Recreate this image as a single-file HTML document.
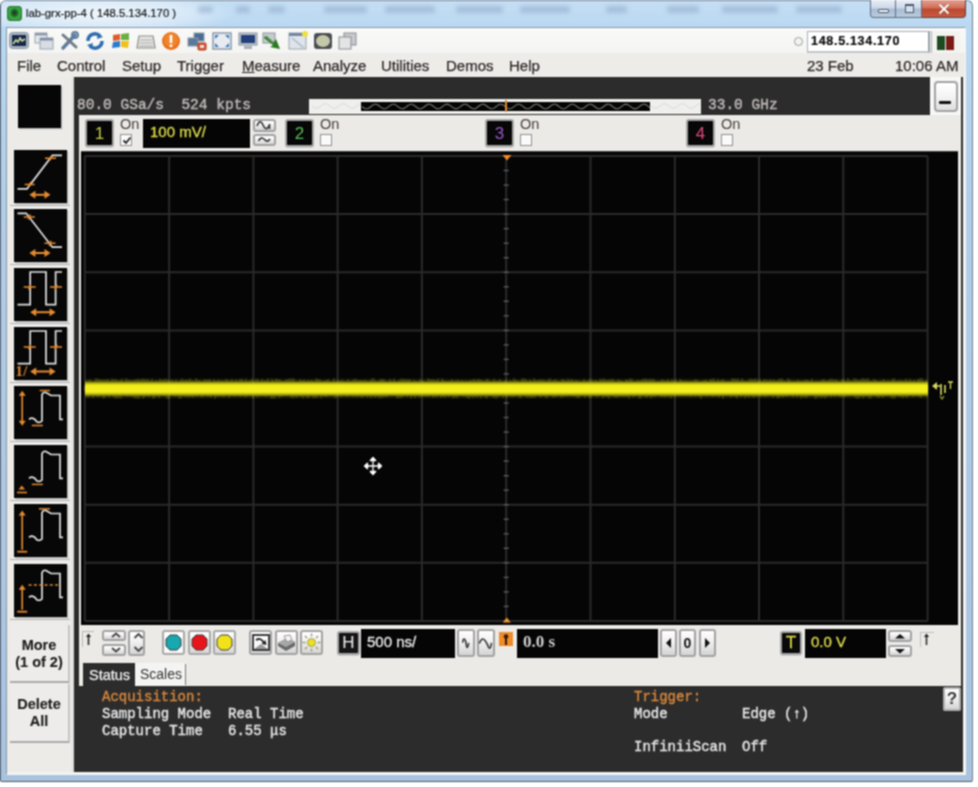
<!DOCTYPE html>
<html><head><meta charset="utf-8">
<style>
*{margin:0;padding:0;box-sizing:border-box}
html,body{width:978px;height:787px;overflow:hidden;background:#fff;font-family:"Liberation Sans",sans-serif}
.a{position:absolute}
.m{position:absolute;font-family:"Liberation Mono",monospace;white-space:pre;line-height:1}
.t{position:absolute;white-space:nowrap;line-height:1}
.btn{position:absolute;background:linear-gradient(#fefefe,#f0f0f0 45%,#d4d4d4);border:2px solid #a2a2a2;border-radius:3px}
.chb{position:absolute;background:#070707;border:2px solid #a4a4a4;border-radius:3px;box-shadow:0 1px 0 #cfcfcf}
.cb{position:absolute;width:12px;height:12px;background:#fafafa;border:1px solid #8f8f8f}
.mb{position:absolute;left:14px;width:53px;height:53px;background:#070707;box-shadow:1px 1px 0 #b8b8b8,2px 2px 0 #dcdcdc}
.blk{position:absolute;background:#050505}
svg{position:absolute;overflow:visible}
#wrap{position:absolute;left:0;top:0;width:978px;height:787px;filter:url(#sb)}
</style></head><body><svg width="0" height="0" style="position:absolute"><filter id="sb" x="0" y="0" width="100%" height="100%" color-interpolation-filters="sRGB"><feConvolveMatrix order="3" kernelMatrix="1 2 1 2 4 2 1 2 1" edgeMode="duplicate"/></filter></svg><div id="wrap">

<div class="a" style="left:0;top:0;width:973px;height:782px;background:linear-gradient(#c4def4,#b9d8f1 26px,#b2cde8 200px,#a9c3df);border:1px solid #6f8296;border-bottom-color:#4a5868;border-left-color:#5a6878;border-radius:6px 6px 2px 2px"></div>
<div class="a" style="left:1px;top:1px;width:260px;height:26px;background:radial-gradient(ellipse 140px 22px at 95px 13px,rgba(255,255,255,.75),rgba(255,255,255,.35) 70%,rgba(255,255,255,0) 100%)"></div>
<div class="a" style="left:198px;top:6px;width:15px;height:7px;background:#8fa8c8;filter:blur(2px);opacity:.55;border-radius:2px"></div>
<div class="a" style="left:236px;top:6px;width:14px;height:7px;background:#8fa8c8;filter:blur(2px);opacity:.55;border-radius:2px"></div>
<div class="a" style="left:268px;top:6px;width:17px;height:7px;background:#8fa8c8;filter:blur(2px);opacity:.55;border-radius:2px"></div>
<div class="a" style="left:324px;top:6px;width:43px;height:7px;background:#8fa8c8;filter:blur(2px);opacity:.55;border-radius:2px"></div>
<div class="a" style="left:385px;top:6px;width:50px;height:7px;background:#8fa8c8;filter:blur(2px);opacity:.55;border-radius:2px"></div>
<div class="a" style="left:456px;top:6px;width:47px;height:7px;background:#8fa8c8;filter:blur(2px);opacity:.55;border-radius:2px"></div>
<div class="a" style="left:520px;top:6px;width:50px;height:7px;background:#8fa8c8;filter:blur(2px);opacity:.55;border-radius:2px"></div>
<div class="a" style="left:606px;top:6px;width:21px;height:7px;background:#8fa8c8;filter:blur(2px);opacity:.55;border-radius:2px"></div>
<div class="a" style="left:667px;top:6px;width:32px;height:7px;background:#8fa8c8;filter:blur(2px);opacity:.55;border-radius:2px"></div>
<div class="a" style="left:722px;top:6px;width:56px;height:7px;background:#8fa8c8;filter:blur(2px);opacity:.55;border-radius:2px"></div>
<div class="a" style="left:796px;top:6px;width:46px;height:7px;background:#8fa8c8;filter:blur(2px);opacity:.55;border-radius:2px"></div>
<div class="a" style="left:7px;top:6px;width:15px;height:15px;background:radial-gradient(ellipse at 50% 45%,#183c1a 0,#1f5a24 25%,#3bab47 55%,#2b8a34 100%);border-radius:3px;border:1px solid #2a7a30"></div>
<div class="t" style="left:26px;top:8px;font-size:11.3px;color:#161616;-webkit-text-stroke:0.2px #161616">lab-grx-pp-4 ( 148.5.134.170 )</div>
<div class="a" style="left:870px;top:0;width:26px;height:18px;background:linear-gradient(#e8eef6,#ccd9e8 45%,#a9bcd3 55%,#b9cade);border:1px solid #5d6d80;border-top:none;border-radius:0 0 0 4px"></div>
<div class="a" style="left:878px;top:9px;width:11px;height:4px;background:#f4f6f8;border:1px solid #4a586a;border-radius:1px"></div>
<div class="a" style="left:896px;top:0;width:26px;height:18px;background:linear-gradient(#e8eef6,#ccd9e8 45%,#a9bcd3 55%,#b9cade);border:1px solid #5d6d80;border-top:none;border-left:none"></div>
<div class="a" style="left:905px;top:4px;width:9px;height:9px;border:1px solid #4a586a;border-top-width:2px;background:#d6e0ec"></div>
<div class="a" style="left:922px;top:0;width:44px;height:18px;background:linear-gradient(#e4a090,#d07058 45%,#bc4830 55%,#c85a40);border:1px solid #5e4038;border-top:none;border-left:none;border-radius:0 0 4px 0"></div>
<svg style="left:937px;top:3px" width="14" height="12"><path d="M2.5 1.5 L11.5 10.5 M11.5 1.5 L2.5 10.5" stroke="#6a3a30" stroke-width="3.6" opacity=".45"/><path d="M2.5 1.5 L11.5 10.5 M11.5 1.5 L2.5 10.5" stroke="#fff" stroke-width="2"/></svg>
<div class="a" style="left:6px;top:27px;width:960px;height:748px;background:#f1f1ef;border:1px solid #8797a8;border-right-color:#f4f6f8;border-bottom-color:#f4f6f8"></div>
<div class="a" style="left:7px;top:28px;width:958px;height:25px;background:linear-gradient(#f9f9f8,#f4f4f2)"></div>
<div class="a" style="left:7px;top:53px;width:958px;height:24px;background:#edece9"></div>
<svg style="left:9px;top:32px" width="20" height="18"><rect x="0.5" y="0.5" width="19" height="16" rx="3" fill="#aab4c0" stroke="#8a96a4"/><rect x="3" y="3" width="14" height="11" fill="#15294a"/><path d="M4 12 L7 8 L9 10 L11 6 L13 9 L16 7" stroke="#d8dca0" stroke-width="1.6" fill="none"/></svg>
<svg style="left:34px;top:32px" width="20" height="18"><rect x="1" y="1" width="12" height="10" fill="#e4e8ee" stroke="#9aa4b0"/><rect x="1" y="1" width="12" height="2.5" fill="#8c98a8"/><rect x="6" y="6" width="13" height="11" fill="#d8dde4" stroke="#9aa4b0"/><rect x="6" y="6" width="13" height="2.5" fill="#7f8ea2"/></svg>
<svg style="left:60px;top:32px" width="20" height="18"><path d="M3 16 L15 3" stroke="#5f7ea0" stroke-width="3.5" stroke-linecap="round"/><path d="M3 3 L16 15" stroke="#6f7c88" stroke-width="3" stroke-linecap="round"/><circle cx="15" cy="3" r="3" fill="none" stroke="#5f7ea0" stroke-width="2"/></svg>
<svg style="left:85px;top:32px" width="20" height="18"><path d="M3 9 A7 7 0 0 1 15 4" stroke="#2f6cb0" stroke-width="3.5" fill="none"/><path d="M17 9 A7 7 0 0 1 5 14" stroke="#2f6cb0" stroke-width="3.5" fill="none"/><path d="M13 1 L18 5 L12 7Z M7 17 L2 13 L8 11Z" fill="#2f6cb0"/></svg>
<svg style="left:111px;top:32px" width="20" height="18"><path d="M2 3 L9 2 L9 8 L2 9Z" fill="#e05a2a"/><path d="M10 2 L18 1 L18 8 L10 8Z" fill="#6ab040"/><path d="M2 10 L9 9 L9 15 L1 16Z" fill="#2a7ad0"/><path d="M10 9 L18 9 L17 16 L10 15Z" fill="#f0c020"/></svg>
<svg style="left:136px;top:32px" width="20" height="18"><path d="M3 4 L17 4 L19 16 L1 16Z" fill="#e6e6e2" stroke="#8a8a86" stroke-width="1.2"/><path d="M4 8 H16 M3.5 11 H16.5 M3 14 H17" stroke="#a8a8a4"/></svg>
<svg style="left:161px;top:32px" width="20" height="18"><circle cx="10" cy="9" r="9" fill="#e8701c"/><circle cx="10" cy="8" r="7" fill="#f0842a"/><rect x="8.7" y="3" width="2.6" height="8" fill="#fff"/><rect x="8.7" y="12.5" width="2.6" height="2.6" fill="#fff"/></svg>
<svg style="left:187px;top:32px" width="20" height="18"><rect x="7" y="1" width="10" height="8" fill="#4a6a90" stroke="#8a9cb0"/><rect x="1" y="6" width="10" height="8" fill="#5a7898" stroke="#8a9cb0"/><rect x="11" y="11" width="8" height="7" rx="1" fill="#d85838" stroke="#a83a20"/><rect x="13" y="13" width="4" height="3" fill="#f4d8d0"/></svg>
<svg style="left:212px;top:32px" width="20" height="18"><rect x="1" y="1" width="18" height="16" fill="#e8ecf0" stroke="#8a98a8" stroke-width="1.5"/><path d="M3 3 L7 3 L3 7Z M17 3 L13 3 L17 7Z M3 15 L7 15 L3 11Z M17 15 L13 15 L17 11Z" fill="#3a7ac0"/></svg>
<svg style="left:238px;top:32px" width="20" height="18"><rect x="1" y="1" width="18" height="12" fill="#b8c0cc" stroke="#8a94a2"/><rect x="3" y="3" width="14" height="8" fill="#23407a"/><rect x="6" y="14" width="8" height="3" fill="#a8b0b8"/></svg>
<svg style="left:262px;top:32px" width="20" height="18"><rect x="1" y="1" width="12" height="10" fill="#c8ccd2" stroke="#8a929c"/><path d="M3 4 L11 11 L14 7 L18 17 L8 15 L11 13 L2 6Z" fill="#2a7a24"/><path d="M4 4 L11 10" stroke="#5aa050" stroke-width="1.5"/></svg>
<svg style="left:288px;top:32px" width="20" height="18"><rect x="1" y="1" width="17" height="16" fill="#dfe4ea" stroke="#9aa4b0"/><rect x="1" y="1" width="17" height="3" fill="#7488a4"/><circle cx="17" cy="2" r="3" fill="#f0e040"/><path d="M4 6 L16 16" stroke="#b8c4d2" stroke-width="2"/></svg>
<svg style="left:313px;top:32px" width="20" height="18"><rect x="1" y="1" width="18" height="16" rx="3" fill="#4a4e52"/><ellipse cx="10" cy="9" rx="7" ry="6" fill="#c4c8a8"/></svg>
<svg style="left:338px;top:32px" width="20" height="18"><rect x="6" y="1" width="12" height="12" fill="#c8cacc" stroke="#8a8c90"/><rect x="1" y="5" width="12" height="12" fill="#e2e4e6" stroke="#8a8c90"/></svg>
<div class="t" style="left:17px;top:58px;font-size:15px;color:#2c2626;-webkit-text-stroke:0.25px #2c2626">File</div>
<div class="t" style="left:57px;top:58px;font-size:15px;color:#2c2626;-webkit-text-stroke:0.25px #2c2626">Control</div>
<div class="t" style="left:122px;top:58px;font-size:15px;color:#2c2626;-webkit-text-stroke:0.25px #2c2626">Setup</div>
<div class="t" style="left:177px;top:58px;font-size:15px;color:#2c2626;-webkit-text-stroke:0.25px #2c2626">Trigger</div>
<div class="t" style="left:242px;top:58px;font-size:15px;color:#2c2626;-webkit-text-stroke:0.25px #2c2626"><u>M</u>easure</div>
<div class="t" style="left:313px;top:58px;font-size:15px;color:#2c2626;-webkit-text-stroke:0.25px #2c2626">Analyze</div>
<div class="t" style="left:381px;top:58px;font-size:15px;color:#2c2626;-webkit-text-stroke:0.25px #2c2626">Utilities</div>
<div class="t" style="left:446px;top:58px;font-size:15px;color:#2c2626;-webkit-text-stroke:0.25px #2c2626">Demos</div>
<div class="t" style="left:509px;top:58px;font-size:15px;color:#2c2626;-webkit-text-stroke:0.25px #2c2626">Help</div>
<div class="t" style="left:807px;top:58px;font-size:15px;color:#2c2626;-webkit-text-stroke:0.25px #2c2626">23 Feb</div>
<div class="t" style="left:895px;top:58px;font-size:15px;color:#2c2626;-webkit-text-stroke:0.25px #2c2626">10:06 AM</div>
<div class="a" style="left:794px;top:37px;width:9px;height:9px;border:1px solid #9a9a9a;border-radius:50%;background:#f4f4f4"></div>
<div class="a" style="left:807px;top:31px;width:123px;height:22px;background:#fff;border:1px solid #a8b0ba;border-right:2px solid #9aa0a8;border-bottom:2px solid #c0c6cc"></div>
<div class="t" style="left:811px;top:35px;font-size:12.5px;font-weight:bold;color:#0a0a0a;letter-spacing:0.7px;-webkit-text-stroke:0.2px #0a0a0a">148.5.134.170</div>
<div class="a" style="left:931px;top:31px;width:29px;height:22px;background:#f2f2f0;border-left:1px solid #b0b0b0"></div>
<div class="a" style="left:937px;top:36px;width:8px;height:14px;background:#1e4a22"></div>
<div class="a" style="left:946px;top:36px;width:8px;height:14px;background:#7a1a16"></div>
<div class="a" style="left:74px;top:77px;width:889px;height:695px;background:#2c2c2c"></div>
<div class="a" style="left:7px;top:77px;width:67px;height:695px;background:#ecebe8"></div>
<div class="a" style="left:72px;top:77px;width:2px;height:695px;background:#dcdcda"></div>
<div class="a" style="left:930px;top:77px;width:31px;height:38px;background:#f7f7f6"></div>
<div class="a" style="left:79px;top:115px;width:882px;height:571px;background:#ebeae7"></div>
<div class="m" style="left:77px;top:98px;font-size:14.5px;color:#bdb7b7;-webkit-text-stroke:0.45px #bdb7b7">80.0 GSa/s  524 kpts</div>
<div class="m" style="left:708px;top:98px;font-size:14.5px;color:#bdb7b7;-webkit-text-stroke:0.45px #bdb7b7">33.0 GHz</div>
<div class="a" style="left:309px;top:99px;width:392px;height:15px;background:#efefee"></div>
<div class="a" style="left:361px;top:102px;width:289px;height:9px;background:#050505"></div>
<svg style="left:362px;top:0" width="288" height="1"><polyline points="0.0,106.50 1.0,107.29 2.0,107.99 3.0,108.50 4.0,108.77 5.0,108.76 6.0,108.48 7.0,107.95 8.0,107.25 9.0,106.46 10.0,105.67 11.0,104.98 12.0,104.48 13.0,104.23 14.0,104.25 15.0,104.54 16.0,105.08 17.0,105.79 18.0,106.58 19.0,107.37 20.0,108.05 21.0,108.54 22.0,108.78 23.0,108.74 24.0,108.44 25.0,107.89 26.0,107.18 27.0,106.38 28.0,105.60 29.0,104.92 30.0,104.44 31.0,104.21 32.0,104.26 33.0,104.59 34.0,105.14 35.0,105.86 36.0,106.66 37.0,107.44 38.0,108.10 39.0,108.57 40.0,108.79 41.0,108.73 42.0,108.39 43.0,107.83 44.0,107.10 45.0,106.30 46.0,105.52 47.0,104.87 48.0,104.41 49.0,104.21 50.0,104.28 51.0,104.63 52.0,105.21 53.0,105.94 54.0,106.74 55.0,107.51 56.0,108.16 57.0,108.61 58.0,108.80 59.0,108.70 60.0,108.34 61.0,107.76 62.0,107.02 63.0,106.22 64.0,105.45 65.0,104.81 66.0,104.38 67.0,104.20 68.0,104.31 69.0,104.68 70.0,105.28 71.0,106.02 72.0,106.82 73.0,107.59 74.0,108.22 75.0,108.64 76.0,108.80 77.0,108.68 78.0,108.29 79.0,107.69 80.0,106.94 81.0,106.14 82.0,105.38 83.0,104.76 84.0,104.35 85.0,104.20 86.0,104.33 87.0,104.73 88.0,105.34 89.0,106.10 90.0,106.90 91.0,107.66 92.0,108.27 93.0,108.67 94.0,108.80 95.0,108.65 96.0,108.24 97.0,107.62 98.0,106.86 99.0,106.06 100.0,105.31 101.0,104.71 102.0,104.32 103.0,104.20 104.0,104.36 105.0,104.78 106.0,105.41 107.0,106.18 108.0,106.98 109.0,107.72 110.0,108.32 111.0,108.69 112.0,108.80 113.0,108.62 114.0,108.19 115.0,107.55 116.0,106.78 117.0,105.98 118.0,105.24 119.0,104.66 120.0,104.30 121.0,104.20 122.0,104.39 123.0,104.84 124.0,105.49 125.0,106.26 126.0,107.06 127.0,107.79 128.0,108.37 129.0,108.72 130.0,108.79 131.0,108.59 132.0,108.13 133.0,107.48 134.0,106.70 135.0,105.90 136.0,105.17 137.0,104.61 138.0,104.27 139.0,104.21 140.0,104.43 141.0,104.90 142.0,105.56 143.0,106.34 144.0,107.14 145.0,107.86 146.0,108.41 147.0,108.74 148.0,108.79 149.0,108.56 150.0,108.08 151.0,107.40 152.0,106.62 153.0,105.82 154.0,105.11 155.0,104.56 156.0,104.26 157.0,104.22 158.0,104.46 159.0,104.95 160.0,105.63 161.0,106.42 162.0,107.21 163.0,107.92 164.0,108.46 165.0,108.75 166.0,108.77 167.0,108.52 168.0,108.02 169.0,107.33 170.0,106.54 171.0,105.75 172.0,105.05 173.0,104.52 174.0,104.24 175.0,104.23 176.0,104.50 177.0,105.01 178.0,105.71 179.0,106.50 180.0,107.29 181.0,107.99 182.0,108.50 183.0,108.77 184.0,108.76 185.0,108.48 186.0,107.95 187.0,107.25 188.0,106.46 189.0,105.67 190.0,104.98 191.0,104.48 192.0,104.23 193.0,104.25 194.0,104.54 195.0,105.08 196.0,105.79 197.0,106.58 198.0,107.37 199.0,108.05 200.0,108.54 201.0,108.78 202.0,108.74 203.0,108.44 204.0,107.89 205.0,107.18 206.0,106.38 207.0,105.60 208.0,104.92 209.0,104.44 210.0,104.21 211.0,104.26 212.0,104.59 213.0,105.14 214.0,105.86 215.0,106.66 216.0,107.44 217.0,108.10 218.0,108.57 219.0,108.79 220.0,108.73 221.0,108.39 222.0,107.83 223.0,107.10 224.0,106.30 225.0,105.52 226.0,104.87 227.0,104.41 228.0,104.21 229.0,104.28 230.0,104.63 231.0,105.21 232.0,105.94 233.0,106.74 234.0,107.51 235.0,108.16 236.0,108.61 237.0,108.80 238.0,108.70 239.0,108.34 240.0,107.76 241.0,107.02 242.0,106.22 243.0,105.45 244.0,104.81 245.0,104.38 246.0,104.20 247.0,104.31 248.0,104.68 249.0,105.28 250.0,106.02 251.0,106.82 252.0,107.59 253.0,108.22 254.0,108.64 255.0,108.80 256.0,108.68 257.0,108.29 258.0,107.69 259.0,106.94 260.0,106.14 261.0,105.38 262.0,104.76 263.0,104.35 264.0,104.20 265.0,104.33 266.0,104.73 267.0,105.34 268.0,106.10 269.0,106.90 270.0,107.66 271.0,108.27 272.0,108.67 273.0,108.80 274.0,108.65 275.0,108.24 276.0,107.62 277.0,106.86 278.0,106.06 279.0,105.31 280.0,104.71 281.0,104.32 282.0,104.20 283.0,104.36 284.0,104.78 285.0,105.41 286.0,106.18 287.0,106.98 288.0,107.72" fill="none" stroke="#7c7c7c" stroke-width="1.1" opacity="1"/></svg>
<svg style="left:312px;top:0" width="48" height="1"><polyline points="0.0,106.00 1.0,106.79 2.0,107.49 3.0,108.00 4.0,108.27 5.0,108.26 6.0,107.98 7.0,107.45 8.0,106.75 9.0,105.96 10.0,105.17 11.0,104.48 12.0,103.98 13.0,103.73 14.0,103.75 15.0,104.04 16.0,104.58 17.0,105.29 18.0,106.08 19.0,106.87 20.0,107.55 21.0,108.04 22.0,108.28 23.0,108.24 24.0,107.94 25.0,107.39 26.0,106.68 27.0,105.88 28.0,105.10 29.0,104.42 30.0,103.94 31.0,103.71 32.0,103.76 33.0,104.09 34.0,104.64 35.0,105.36 36.0,106.16 37.0,106.94 38.0,107.60 39.0,108.07 40.0,108.29 41.0,108.23 42.0,107.89 43.0,107.33 44.0,106.60 45.0,105.80 46.0,105.02 47.0,104.37 48.0,103.91" fill="none" stroke="#dadada" stroke-width="1.0" opacity="1"/></svg>
<svg style="left:651px;top:0" width="49" height="1"><polyline points="0.0,106.00 1.0,106.79 2.0,107.49 3.0,108.00 4.0,108.27 5.0,108.26 6.0,107.98 7.0,107.45 8.0,106.75 9.0,105.96 10.0,105.17 11.0,104.48 12.0,103.98 13.0,103.73 14.0,103.75 15.0,104.04 16.0,104.58 17.0,105.29 18.0,106.08 19.0,106.87 20.0,107.55 21.0,108.04 22.0,108.28 23.0,108.24 24.0,107.94 25.0,107.39 26.0,106.68 27.0,105.88 28.0,105.10 29.0,104.42 30.0,103.94 31.0,103.71 32.0,103.76 33.0,104.09 34.0,104.64 35.0,105.36 36.0,106.16 37.0,106.94 38.0,107.60 39.0,108.07 40.0,108.29 41.0,108.23 42.0,107.89 43.0,107.33 44.0,106.60 45.0,105.80 46.0,105.02 47.0,104.37 48.0,103.91 49.0,103.71" fill="none" stroke="#dadada" stroke-width="1.0" opacity="1"/></svg>
<div class="a" style="left:505px;top:100px;width:2px;height:12px;background:#e08a30"></div>
<div class="btn" style="left:934px;top:81px;width:24px;height:31px;border-radius:4px;background:linear-gradient(#fff,#f4f4f4 50%,#dedede)"></div>
<div class="a" style="left:939px;top:101px;width:12px;height:3px;background:#111;border-radius:1px"></div>
<div class="chb" style="left:85px;top:119px;width:29px;height:28px"></div>
<div class="t" style="left:85px;top:125px;width:29px;text-align:center;font-size:17px;color:#c8cc48">1</div>
<div class="t" style="left:120px;top:117px;font-size:14.5px;color:#463c3c">On</div>
<div class="cb" style="left:120px;top:134px"></div>
<svg style="left:122px;top:136px" width="10" height="9"><path d="M1.5 4.5 L4 7 L8.5 1.5" stroke="#222" stroke-width="1.8" fill="none"/></svg>
<div class="blk" style="left:143px;top:119px;width:107px;height:29px"></div>
<div class="t" style="left:150px;top:124px;font-size:15px;color:#dcdc48;-webkit-text-stroke:0.35px #dcdc48">100 mV/</div>
<div class="btn" style="left:253px;top:119px;width:23px;height:13px"></div>
<div class="btn" style="left:253px;top:134px;width:23px;height:12px"></div>
<svg style="left:252px;top:119px" width="24" height="13"><path d="M5 7 Q8 -1 11 6 Q13.5 12 16.5 8 Q17.5 6 17.5 5 V10" stroke="#333" stroke-width="1.6" fill="none"/></svg>
<svg style="left:252px;top:134px" width="24" height="12"><path d="M6.5 7 Q9 2 12.5 5.5 Q15.5 9 18 5" stroke="#333" stroke-width="1.6" fill="none"/></svg>
<div class="chb" style="left:285px;top:119px;width:29px;height:28px"></div>
<div class="t" style="left:285px;top:125px;width:29px;text-align:center;font-size:17px;color:#58c058">2</div>
<div class="t" style="left:320px;top:117px;font-size:14.5px;color:#463c3c">On</div>
<div class="cb" style="left:320px;top:134px"></div>
<div class="chb" style="left:485px;top:119px;width:29px;height:28px"></div>
<div class="t" style="left:485px;top:125px;width:29px;text-align:center;font-size:17px;color:#9a5ac8">3</div>
<div class="t" style="left:520px;top:117px;font-size:14.5px;color:#463c3c">On</div>
<div class="cb" style="left:520px;top:134px"></div>
<div class="chb" style="left:686px;top:119px;width:29px;height:28px"></div>
<div class="t" style="left:686px;top:125px;width:29px;text-align:center;font-size:17px;color:#e04a7a">4</div>
<div class="t" style="left:721px;top:117px;font-size:14.5px;color:#463c3c">On</div>
<div class="cb" style="left:721px;top:134px"></div>
<div class="blk" style="left:81px;top:151px;width:877px;height:474px;border-top:1px solid #3a3a3a"></div>
<svg style="left:0;top:0" width="978" height="787"><g stroke="#2a2a2a" stroke-width="2"><line x1="84.8" y1="156.0" x2="84.8" y2="620.96" /><line x1="169.1" y1="156.0" x2="169.1" y2="620.96" /><line x1="253.4" y1="156.0" x2="253.4" y2="620.96" /><line x1="337.6" y1="156.0" x2="337.6" y2="620.96" /><line x1="421.9" y1="156.0" x2="421.9" y2="620.96" /><line x1="506.2" y1="156.0" x2="506.2" y2="620.96" /><line x1="590.5" y1="156.0" x2="590.5" y2="620.96" /><line x1="674.8" y1="156.0" x2="674.8" y2="620.96" /><line x1="759.0" y1="156.0" x2="759.0" y2="620.96" /><line x1="843.3" y1="156.0" x2="843.3" y2="620.96" /><line x1="927.6" y1="156.0" x2="927.6" y2="620.96" /><line x1="84.8" y1="156.0" x2="927.6" y2="156.0" /><line x1="84.8" y1="214.1" x2="927.6" y2="214.1" /><line x1="84.8" y1="272.2" x2="927.6" y2="272.2" /><line x1="84.8" y1="330.4" x2="927.6" y2="330.4" /><line x1="84.8" y1="388.5" x2="927.6" y2="388.5" /><line x1="84.8" y1="446.6" x2="927.6" y2="446.6" /><line x1="84.8" y1="504.7" x2="927.6" y2="504.7" /><line x1="84.8" y1="562.8" x2="927.6" y2="562.8" /><line x1="84.8" y1="621.0" x2="927.6" y2="621.0" /></g><g stroke="#5c5c5c" stroke-width="1.4"><line x1="503.7" y1="156.0" x2="508.7" y2="156.0" /><line x1="503.7" y1="170.5" x2="508.7" y2="170.5" /><line x1="503.7" y1="185.1" x2="508.7" y2="185.1" /><line x1="503.7" y1="199.6" x2="508.7" y2="199.6" /><line x1="503.7" y1="214.1" x2="508.7" y2="214.1" /><line x1="503.7" y1="228.6" x2="508.7" y2="228.6" /><line x1="503.7" y1="243.2" x2="508.7" y2="243.2" /><line x1="503.7" y1="257.7" x2="508.7" y2="257.7" /><line x1="503.7" y1="272.2" x2="508.7" y2="272.2" /><line x1="503.7" y1="286.8" x2="508.7" y2="286.8" /><line x1="503.7" y1="301.3" x2="508.7" y2="301.3" /><line x1="503.7" y1="315.8" x2="508.7" y2="315.8" /><line x1="503.7" y1="330.4" x2="508.7" y2="330.4" /><line x1="503.7" y1="344.9" x2="508.7" y2="344.9" /><line x1="503.7" y1="359.4" x2="508.7" y2="359.4" /><line x1="503.7" y1="373.9" x2="508.7" y2="373.9" /><line x1="503.7" y1="388.5" x2="508.7" y2="388.5" /><line x1="503.7" y1="403.0" x2="508.7" y2="403.0" /><line x1="503.7" y1="417.5" x2="508.7" y2="417.5" /><line x1="503.7" y1="432.1" x2="508.7" y2="432.1" /><line x1="503.7" y1="446.6" x2="508.7" y2="446.6" /><line x1="503.7" y1="461.1" x2="508.7" y2="461.1" /><line x1="503.7" y1="475.7" x2="508.7" y2="475.7" /><line x1="503.7" y1="490.2" x2="508.7" y2="490.2" /><line x1="503.7" y1="504.7" x2="508.7" y2="504.7" /><line x1="503.7" y1="519.2" x2="508.7" y2="519.2" /><line x1="503.7" y1="533.8" x2="508.7" y2="533.8" /><line x1="503.7" y1="548.3" x2="508.7" y2="548.3" /><line x1="503.7" y1="562.8" x2="508.7" y2="562.8" /><line x1="503.7" y1="577.4" x2="508.7" y2="577.4" /><line x1="503.7" y1="591.9" x2="508.7" y2="591.9" /><line x1="503.7" y1="606.4" x2="508.7" y2="606.4" /><line x1="503.7" y1="621.0" x2="508.7" y2="621.0" /><line x1="84.8" y1="386.0" x2="84.8" y2="391.0" /><line x1="105.9" y1="386.0" x2="105.9" y2="391.0" /><line x1="126.9" y1="386.0" x2="126.9" y2="391.0" /><line x1="148.0" y1="386.0" x2="148.0" y2="391.0" /><line x1="169.1" y1="386.0" x2="169.1" y2="391.0" /><line x1="190.1" y1="386.0" x2="190.1" y2="391.0" /><line x1="211.2" y1="386.0" x2="211.2" y2="391.0" /><line x1="232.3" y1="386.0" x2="232.3" y2="391.0" /><line x1="253.4" y1="386.0" x2="253.4" y2="391.0" /><line x1="274.4" y1="386.0" x2="274.4" y2="391.0" /><line x1="295.5" y1="386.0" x2="295.5" y2="391.0" /><line x1="316.6" y1="386.0" x2="316.6" y2="391.0" /><line x1="337.6" y1="386.0" x2="337.6" y2="391.0" /><line x1="358.7" y1="386.0" x2="358.7" y2="391.0" /><line x1="379.8" y1="386.0" x2="379.8" y2="391.0" /><line x1="400.9" y1="386.0" x2="400.9" y2="391.0" /><line x1="421.9" y1="386.0" x2="421.9" y2="391.0" /><line x1="443.0" y1="386.0" x2="443.0" y2="391.0" /><line x1="464.1" y1="386.0" x2="464.1" y2="391.0" /><line x1="485.1" y1="386.0" x2="485.1" y2="391.0" /><line x1="506.2" y1="386.0" x2="506.2" y2="391.0" /><line x1="527.3" y1="386.0" x2="527.3" y2="391.0" /><line x1="548.3" y1="386.0" x2="548.3" y2="391.0" /><line x1="569.4" y1="386.0" x2="569.4" y2="391.0" /><line x1="590.5" y1="386.0" x2="590.5" y2="391.0" /><line x1="611.5" y1="386.0" x2="611.5" y2="391.0" /><line x1="632.6" y1="386.0" x2="632.6" y2="391.0" /><line x1="653.7" y1="386.0" x2="653.7" y2="391.0" /><line x1="674.8" y1="386.0" x2="674.8" y2="391.0" /><line x1="695.8" y1="386.0" x2="695.8" y2="391.0" /><line x1="716.9" y1="386.0" x2="716.9" y2="391.0" /><line x1="738.0" y1="386.0" x2="738.0" y2="391.0" /><line x1="759.0" y1="386.0" x2="759.0" y2="391.0" /><line x1="780.1" y1="386.0" x2="780.1" y2="391.0" /><line x1="801.2" y1="386.0" x2="801.2" y2="391.0" /><line x1="822.2" y1="386.0" x2="822.2" y2="391.0" /><line x1="843.3" y1="386.0" x2="843.3" y2="391.0" /><line x1="864.4" y1="386.0" x2="864.4" y2="391.0" /><line x1="885.5" y1="386.0" x2="885.5" y2="391.0" /><line x1="906.5" y1="386.0" x2="906.5" y2="391.0" /><line x1="927.6" y1="386.0" x2="927.6" y2="391.0" /></g></svg>
<div class="a" style="left:85px;top:378px;width:843px;height:21px;background:linear-gradient(rgba(200,200,20,0) 0,rgba(190,190,20,.22) 3px,rgba(225,220,16,.85) 5.5px,#f2ee1a 7.5px,#f4f022 14px,rgba(225,220,16,.85) 16px,rgba(190,190,20,.22) 18.5px,rgba(200,200,20,0) 21px)"></div>
<svg style="left:0;top:0" width="978" height="787"><g stroke="#a8a820" stroke-width="1" opacity=".45"><line x1="86" y1="381.0" x2="86" y2="383.5" /><line x1="87" y1="393.5" x2="87" y2="397.2" /><line x1="88" y1="380.5" x2="88" y2="383.5" /><line x1="89" y1="393.5" x2="89" y2="397.4" /><line x1="90" y1="379.5" x2="90" y2="383.5" /><line x1="91" y1="393.5" x2="91" y2="395.3" /><line x1="92" y1="381.9" x2="92" y2="383.5" /><line x1="93" y1="393.5" x2="93" y2="398.3" /><line x1="94" y1="381.0" x2="94" y2="383.5" /><line x1="95" y1="393.5" x2="95" y2="395.9" /><line x1="96" y1="378.0" x2="96" y2="383.5" /><line x1="97" y1="393.5" x2="97" y2="396.9" /><line x1="98" y1="378.7" x2="98" y2="383.5" /><line x1="99" y1="393.5" x2="99" y2="396.9" /><line x1="100" y1="379.4" x2="100" y2="383.5" /><line x1="101" y1="393.5" x2="101" y2="395.6" /><line x1="102" y1="379.5" x2="102" y2="383.5" /><line x1="103" y1="393.5" x2="103" y2="398.5" /><line x1="104" y1="379.9" x2="104" y2="383.5" /><line x1="105" y1="393.5" x2="105" y2="398.0" /><line x1="106" y1="379.3" x2="106" y2="383.5" /><line x1="107" y1="393.5" x2="107" y2="395.3" /><line x1="108" y1="379.0" x2="108" y2="383.5" /><line x1="109" y1="393.5" x2="109" y2="397.4" /><line x1="110" y1="380.8" x2="110" y2="383.5" /><line x1="111" y1="393.5" x2="111" y2="395.1" /><line x1="112" y1="378.5" x2="112" y2="383.5" /><line x1="113" y1="393.5" x2="113" y2="396.9" /><line x1="114" y1="379.1" x2="114" y2="383.5" /><line x1="115" y1="393.5" x2="115" y2="398.5" /><line x1="116" y1="379.1" x2="116" y2="383.5" /><line x1="117" y1="393.5" x2="117" y2="398.7" /><line x1="118" y1="380.4" x2="118" y2="383.5" /><line x1="119" y1="393.5" x2="119" y2="398.2" /><line x1="120" y1="380.2" x2="120" y2="383.5" /><line x1="121" y1="393.5" x2="121" y2="398.7" /><line x1="122" y1="378.5" x2="122" y2="383.5" /><line x1="123" y1="393.5" x2="123" y2="395.4" /><line x1="124" y1="381.5" x2="124" y2="383.5" /><line x1="125" y1="393.5" x2="125" y2="395.9" /><line x1="126" y1="378.1" x2="126" y2="383.5" /><line x1="127" y1="393.5" x2="127" y2="396.7" /><line x1="128" y1="379.5" x2="128" y2="383.5" /><line x1="129" y1="393.5" x2="129" y2="396.2" /><line x1="130" y1="380.0" x2="130" y2="383.5" /><line x1="131" y1="393.5" x2="131" y2="396.5" /><line x1="132" y1="380.6" x2="132" y2="383.5" /><line x1="133" y1="393.5" x2="133" y2="397.3" /><line x1="134" y1="379.7" x2="134" y2="383.5" /><line x1="135" y1="393.5" x2="135" y2="398.6" /><line x1="136" y1="379.3" x2="136" y2="383.5" /><line x1="137" y1="393.5" x2="137" y2="398.7" /><line x1="138" y1="378.6" x2="138" y2="383.5" /><line x1="139" y1="393.5" x2="139" y2="399.0" /><line x1="140" y1="379.3" x2="140" y2="383.5" /><line x1="141" y1="393.5" x2="141" y2="395.7" /><line x1="142" y1="378.6" x2="142" y2="383.5" /><line x1="143" y1="393.5" x2="143" y2="398.9" /><line x1="144" y1="378.4" x2="144" y2="383.5" /><line x1="145" y1="393.5" x2="145" y2="397.3" /><line x1="146" y1="379.1" x2="146" y2="383.5" /><line x1="147" y1="393.5" x2="147" y2="395.8" /><line x1="148" y1="378.7" x2="148" y2="383.5" /><line x1="149" y1="393.5" x2="149" y2="397.3" /><line x1="150" y1="380.9" x2="150" y2="383.5" /><line x1="151" y1="393.5" x2="151" y2="395.3" /><line x1="152" y1="378.6" x2="152" y2="383.5" /><line x1="153" y1="393.5" x2="153" y2="399.0" /><line x1="154" y1="381.6" x2="154" y2="383.5" /><line x1="155" y1="393.5" x2="155" y2="398.2" /><line x1="156" y1="380.4" x2="156" y2="383.5" /><line x1="157" y1="393.5" x2="157" y2="395.6" /><line x1="158" y1="380.8" x2="158" y2="383.5" /><line x1="159" y1="393.5" x2="159" y2="398.1" /><line x1="160" y1="378.5" x2="160" y2="383.5" /><line x1="161" y1="393.5" x2="161" y2="395.2" /><line x1="162" y1="379.5" x2="162" y2="383.5" /><line x1="163" y1="393.5" x2="163" y2="395.2" /><line x1="164" y1="379.1" x2="164" y2="383.5" /><line x1="165" y1="393.5" x2="165" y2="396.3" /><line x1="166" y1="378.5" x2="166" y2="383.5" /><line x1="167" y1="393.5" x2="167" y2="398.9" /><line x1="168" y1="380.0" x2="168" y2="383.5" /><line x1="169" y1="393.5" x2="169" y2="399.0" /><line x1="170" y1="380.8" x2="170" y2="383.5" /><line x1="171" y1="393.5" x2="171" y2="395.3" /><line x1="172" y1="379.6" x2="172" y2="383.5" /><line x1="173" y1="393.5" x2="173" y2="395.1" /><line x1="174" y1="381.2" x2="174" y2="383.5" /><line x1="175" y1="393.5" x2="175" y2="396.6" /><line x1="176" y1="379.6" x2="176" y2="383.5" /><line x1="177" y1="393.5" x2="177" y2="395.6" /><line x1="178" y1="381.8" x2="178" y2="383.5" /><line x1="179" y1="393.5" x2="179" y2="398.5" /><line x1="180" y1="380.7" x2="180" y2="383.5" /><line x1="181" y1="393.5" x2="181" y2="398.8" /><line x1="182" y1="378.4" x2="182" y2="383.5" /><line x1="183" y1="393.5" x2="183" y2="396.5" /><line x1="184" y1="380.2" x2="184" y2="383.5" /><line x1="185" y1="393.5" x2="185" y2="397.1" /><line x1="186" y1="379.4" x2="186" y2="383.5" /><line x1="187" y1="393.5" x2="187" y2="397.4" /><line x1="188" y1="379.8" x2="188" y2="383.5" /><line x1="189" y1="393.5" x2="189" y2="397.5" /><line x1="190" y1="378.2" x2="190" y2="383.5" /><line x1="191" y1="393.5" x2="191" y2="397.0" /><line x1="192" y1="380.3" x2="192" y2="383.5" /><line x1="193" y1="393.5" x2="193" y2="397.9" /><line x1="194" y1="381.0" x2="194" y2="383.5" /><line x1="195" y1="393.5" x2="195" y2="396.2" /><line x1="196" y1="378.1" x2="196" y2="383.5" /><line x1="197" y1="393.5" x2="197" y2="397.1" /><line x1="198" y1="379.8" x2="198" y2="383.5" /><line x1="199" y1="393.5" x2="199" y2="395.0" /><line x1="200" y1="380.3" x2="200" y2="383.5" /><line x1="201" y1="393.5" x2="201" y2="397.3" /><line x1="202" y1="381.9" x2="202" y2="383.5" /><line x1="203" y1="393.5" x2="203" y2="397.5" /><line x1="204" y1="379.5" x2="204" y2="383.5" /><line x1="205" y1="393.5" x2="205" y2="395.2" /><line x1="206" y1="379.5" x2="206" y2="383.5" /><line x1="207" y1="393.5" x2="207" y2="396.9" /><line x1="208" y1="379.3" x2="208" y2="383.5" /><line x1="209" y1="393.5" x2="209" y2="396.4" /><line x1="210" y1="379.2" x2="210" y2="383.5" /><line x1="211" y1="393.5" x2="211" y2="398.0" /><line x1="212" y1="381.9" x2="212" y2="383.5" /><line x1="213" y1="393.5" x2="213" y2="395.2" /><line x1="214" y1="379.3" x2="214" y2="383.5" /><line x1="215" y1="393.5" x2="215" y2="398.9" /><line x1="216" y1="381.0" x2="216" y2="383.5" /><line x1="217" y1="393.5" x2="217" y2="396.8" /><line x1="218" y1="379.6" x2="218" y2="383.5" /><line x1="219" y1="393.5" x2="219" y2="396.3" /><line x1="220" y1="380.5" x2="220" y2="383.5" /><line x1="221" y1="393.5" x2="221" y2="396.3" /><line x1="222" y1="380.5" x2="222" y2="383.5" /><line x1="223" y1="393.5" x2="223" y2="397.4" /><line x1="224" y1="380.8" x2="224" y2="383.5" /><line x1="225" y1="393.5" x2="225" y2="396.5" /><line x1="226" y1="378.9" x2="226" y2="383.5" /><line x1="227" y1="393.5" x2="227" y2="395.1" /><line x1="228" y1="379.7" x2="228" y2="383.5" /><line x1="229" y1="393.5" x2="229" y2="397.9" /><line x1="230" y1="380.8" x2="230" y2="383.5" /><line x1="231" y1="393.5" x2="231" y2="395.9" /><line x1="232" y1="378.8" x2="232" y2="383.5" /><line x1="233" y1="393.5" x2="233" y2="396.0" /><line x1="234" y1="381.3" x2="234" y2="383.5" /><line x1="235" y1="393.5" x2="235" y2="396.7" /><line x1="236" y1="379.2" x2="236" y2="383.5" /><line x1="237" y1="393.5" x2="237" y2="395.4" /><line x1="238" y1="380.7" x2="238" y2="383.5" /><line x1="239" y1="393.5" x2="239" y2="396.3" /><line x1="240" y1="378.7" x2="240" y2="383.5" /><line x1="241" y1="393.5" x2="241" y2="396.8" /><line x1="242" y1="378.6" x2="242" y2="383.5" /><line x1="243" y1="393.5" x2="243" y2="395.7" /><line x1="244" y1="380.7" x2="244" y2="383.5" /><line x1="245" y1="393.5" x2="245" y2="397.6" /><line x1="246" y1="378.5" x2="246" y2="383.5" /><line x1="247" y1="393.5" x2="247" y2="396.8" /><line x1="248" y1="381.1" x2="248" y2="383.5" /><line x1="249" y1="393.5" x2="249" y2="395.5" /><line x1="250" y1="379.9" x2="250" y2="383.5" /><line x1="251" y1="393.5" x2="251" y2="395.8" /><line x1="252" y1="378.8" x2="252" y2="383.5" /><line x1="253" y1="393.5" x2="253" y2="398.4" /><line x1="254" y1="381.3" x2="254" y2="383.5" /><line x1="255" y1="393.5" x2="255" y2="396.1" /><line x1="256" y1="378.8" x2="256" y2="383.5" /><line x1="257" y1="393.5" x2="257" y2="397.6" /><line x1="258" y1="378.8" x2="258" y2="383.5" /><line x1="259" y1="393.5" x2="259" y2="396.4" /><line x1="260" y1="381.5" x2="260" y2="383.5" /><line x1="261" y1="393.5" x2="261" y2="396.2" /><line x1="262" y1="378.8" x2="262" y2="383.5" /><line x1="263" y1="393.5" x2="263" y2="396.1" /><line x1="264" y1="380.6" x2="264" y2="383.5" /><line x1="265" y1="393.5" x2="265" y2="396.7" /><line x1="266" y1="380.3" x2="266" y2="383.5" /><line x1="267" y1="393.5" x2="267" y2="396.6" /><line x1="268" y1="378.3" x2="268" y2="383.5" /><line x1="269" y1="393.5" x2="269" y2="395.6" /><line x1="270" y1="382.0" x2="270" y2="383.5" /><line x1="271" y1="393.5" x2="271" y2="398.8" /><line x1="272" y1="378.5" x2="272" y2="383.5" /><line x1="273" y1="393.5" x2="273" y2="398.9" /><line x1="274" y1="380.3" x2="274" y2="383.5" /><line x1="275" y1="393.5" x2="275" y2="398.8" /><line x1="276" y1="378.3" x2="276" y2="383.5" /><line x1="277" y1="393.5" x2="277" y2="395.9" /><line x1="278" y1="379.0" x2="278" y2="383.5" /><line x1="279" y1="393.5" x2="279" y2="398.3" /><line x1="280" y1="379.3" x2="280" y2="383.5" /><line x1="281" y1="393.5" x2="281" y2="397.1" /><line x1="282" y1="380.8" x2="282" y2="383.5" /><line x1="283" y1="393.5" x2="283" y2="396.4" /><line x1="284" y1="381.1" x2="284" y2="383.5" /><line x1="285" y1="393.5" x2="285" y2="395.3" /><line x1="286" y1="379.6" x2="286" y2="383.5" /><line x1="287" y1="393.5" x2="287" y2="396.1" /><line x1="288" y1="378.8" x2="288" y2="383.5" /><line x1="289" y1="393.5" x2="289" y2="395.2" /><line x1="290" y1="378.4" x2="290" y2="383.5" /><line x1="291" y1="393.5" x2="291" y2="397.8" /><line x1="292" y1="378.3" x2="292" y2="383.5" /><line x1="293" y1="393.5" x2="293" y2="398.6" /><line x1="294" y1="378.4" x2="294" y2="383.5" /><line x1="295" y1="393.5" x2="295" y2="397.3" /><line x1="296" y1="381.9" x2="296" y2="383.5" /><line x1="297" y1="393.5" x2="297" y2="398.0" /><line x1="298" y1="381.3" x2="298" y2="383.5" /><line x1="299" y1="393.5" x2="299" y2="396.2" /><line x1="300" y1="379.3" x2="300" y2="383.5" /><line x1="301" y1="393.5" x2="301" y2="397.1" /><line x1="302" y1="380.3" x2="302" y2="383.5" /><line x1="303" y1="393.5" x2="303" y2="398.8" /><line x1="304" y1="379.6" x2="304" y2="383.5" /><line x1="305" y1="393.5" x2="305" y2="396.4" /><line x1="306" y1="381.0" x2="306" y2="383.5" /><line x1="307" y1="393.5" x2="307" y2="398.4" /><line x1="308" y1="380.1" x2="308" y2="383.5" /><line x1="309" y1="393.5" x2="309" y2="398.1" /><line x1="310" y1="380.6" x2="310" y2="383.5" /><line x1="311" y1="393.5" x2="311" y2="395.8" /><line x1="312" y1="379.9" x2="312" y2="383.5" /><line x1="313" y1="393.5" x2="313" y2="398.3" /><line x1="314" y1="381.3" x2="314" y2="383.5" /><line x1="315" y1="393.5" x2="315" y2="398.2" /><line x1="316" y1="378.3" x2="316" y2="383.5" /><line x1="317" y1="393.5" x2="317" y2="398.2" /><line x1="318" y1="378.7" x2="318" y2="383.5" /><line x1="319" y1="393.5" x2="319" y2="395.0" /><line x1="320" y1="379.5" x2="320" y2="383.5" /><line x1="321" y1="393.5" x2="321" y2="398.5" /><line x1="322" y1="381.8" x2="322" y2="383.5" /><line x1="323" y1="393.5" x2="323" y2="396.1" /><line x1="324" y1="380.9" x2="324" y2="383.5" /><line x1="325" y1="393.5" x2="325" y2="397.1" /><line x1="326" y1="380.3" x2="326" y2="383.5" /><line x1="327" y1="393.5" x2="327" y2="396.9" /><line x1="328" y1="378.9" x2="328" y2="383.5" /><line x1="329" y1="393.5" x2="329" y2="395.0" /><line x1="330" y1="381.8" x2="330" y2="383.5" /><line x1="331" y1="393.5" x2="331" y2="395.5" /><line x1="332" y1="381.5" x2="332" y2="383.5" /><line x1="333" y1="393.5" x2="333" y2="395.3" /><line x1="334" y1="378.1" x2="334" y2="383.5" /><line x1="335" y1="393.5" x2="335" y2="398.4" /><line x1="336" y1="381.7" x2="336" y2="383.5" /><line x1="337" y1="393.5" x2="337" y2="397.0" /><line x1="338" y1="380.7" x2="338" y2="383.5" /><line x1="339" y1="393.5" x2="339" y2="396.3" /><line x1="340" y1="380.6" x2="340" y2="383.5" /><line x1="341" y1="393.5" x2="341" y2="397.6" /><line x1="342" y1="379.7" x2="342" y2="383.5" /><line x1="343" y1="393.5" x2="343" y2="396.4" /><line x1="344" y1="381.2" x2="344" y2="383.5" /><line x1="345" y1="393.5" x2="345" y2="396.3" /><line x1="346" y1="381.5" x2="346" y2="383.5" /><line x1="347" y1="393.5" x2="347" y2="397.2" /><line x1="348" y1="379.1" x2="348" y2="383.5" /><line x1="349" y1="393.5" x2="349" y2="396.5" /><line x1="350" y1="381.7" x2="350" y2="383.5" /><line x1="351" y1="393.5" x2="351" y2="395.7" /><line x1="352" y1="380.5" x2="352" y2="383.5" /><line x1="353" y1="393.5" x2="353" y2="397.4" /><line x1="354" y1="378.9" x2="354" y2="383.5" /><line x1="355" y1="393.5" x2="355" y2="396.5" /><line x1="356" y1="378.8" x2="356" y2="383.5" /><line x1="357" y1="393.5" x2="357" y2="397.5" /><line x1="358" y1="380.3" x2="358" y2="383.5" /><line x1="359" y1="393.5" x2="359" y2="396.5" /><line x1="360" y1="380.0" x2="360" y2="383.5" /><line x1="361" y1="393.5" x2="361" y2="397.8" /><line x1="362" y1="380.3" x2="362" y2="383.5" /><line x1="363" y1="393.5" x2="363" y2="397.8" /><line x1="364" y1="380.2" x2="364" y2="383.5" /><line x1="365" y1="393.5" x2="365" y2="396.0" /><line x1="366" y1="379.9" x2="366" y2="383.5" /><line x1="367" y1="393.5" x2="367" y2="397.8" /><line x1="368" y1="381.7" x2="368" y2="383.5" /><line x1="369" y1="393.5" x2="369" y2="396.7" /><line x1="370" y1="380.3" x2="370" y2="383.5" /><line x1="371" y1="393.5" x2="371" y2="398.5" /><line x1="372" y1="378.3" x2="372" y2="383.5" /><line x1="373" y1="393.5" x2="373" y2="396.5" /><line x1="374" y1="378.4" x2="374" y2="383.5" /><line x1="375" y1="393.5" x2="375" y2="398.2" /><line x1="376" y1="381.0" x2="376" y2="383.5" /><line x1="377" y1="393.5" x2="377" y2="396.9" /><line x1="378" y1="381.5" x2="378" y2="383.5" /><line x1="379" y1="393.5" x2="379" y2="398.3" /><line x1="380" y1="379.4" x2="380" y2="383.5" /><line x1="381" y1="393.5" x2="381" y2="398.5" /><line x1="382" y1="378.8" x2="382" y2="383.5" /><line x1="383" y1="393.5" x2="383" y2="397.7" /><line x1="384" y1="379.1" x2="384" y2="383.5" /><line x1="385" y1="393.5" x2="385" y2="397.3" /><line x1="386" y1="381.6" x2="386" y2="383.5" /><line x1="387" y1="393.5" x2="387" y2="397.4" /><line x1="388" y1="382.0" x2="388" y2="383.5" /><line x1="389" y1="393.5" x2="389" y2="395.6" /><line x1="390" y1="378.9" x2="390" y2="383.5" /><line x1="391" y1="393.5" x2="391" y2="395.2" /><line x1="392" y1="381.6" x2="392" y2="383.5" /><line x1="393" y1="393.5" x2="393" y2="395.4" /><line x1="394" y1="378.5" x2="394" y2="383.5" /><line x1="395" y1="393.5" x2="395" y2="395.7" /><line x1="396" y1="381.9" x2="396" y2="383.5" /><line x1="397" y1="393.5" x2="397" y2="398.4" /><line x1="398" y1="381.5" x2="398" y2="383.5" /><line x1="399" y1="393.5" x2="399" y2="398.4" /><line x1="400" y1="379.3" x2="400" y2="383.5" /><line x1="401" y1="393.5" x2="401" y2="398.3" /><line x1="402" y1="378.2" x2="402" y2="383.5" /><line x1="403" y1="393.5" x2="403" y2="397.3" /><line x1="404" y1="378.8" x2="404" y2="383.5" /><line x1="405" y1="393.5" x2="405" y2="395.1" /><line x1="406" y1="378.9" x2="406" y2="383.5" /><line x1="407" y1="393.5" x2="407" y2="397.0" /><line x1="408" y1="379.1" x2="408" y2="383.5" /><line x1="409" y1="393.5" x2="409" y2="395.4" /><line x1="410" y1="379.0" x2="410" y2="383.5" /><line x1="411" y1="393.5" x2="411" y2="398.7" /><line x1="412" y1="381.8" x2="412" y2="383.5" /><line x1="413" y1="393.5" x2="413" y2="396.3" /><line x1="414" y1="379.7" x2="414" y2="383.5" /><line x1="415" y1="393.5" x2="415" y2="398.3" /><line x1="416" y1="381.0" x2="416" y2="383.5" /><line x1="417" y1="393.5" x2="417" y2="395.7" /><line x1="418" y1="381.0" x2="418" y2="383.5" /><line x1="419" y1="393.5" x2="419" y2="397.5" /><line x1="420" y1="379.0" x2="420" y2="383.5" /><line x1="421" y1="393.5" x2="421" y2="396.6" /><line x1="422" y1="380.5" x2="422" y2="383.5" /><line x1="423" y1="393.5" x2="423" y2="396.6" /><line x1="424" y1="380.6" x2="424" y2="383.5" /><line x1="425" y1="393.5" x2="425" y2="396.7" /><line x1="426" y1="381.7" x2="426" y2="383.5" /><line x1="427" y1="393.5" x2="427" y2="397.0" /><line x1="428" y1="378.1" x2="428" y2="383.5" /><line x1="429" y1="393.5" x2="429" y2="396.7" /><line x1="430" y1="379.0" x2="430" y2="383.5" /><line x1="431" y1="393.5" x2="431" y2="395.6" /><line x1="432" y1="379.2" x2="432" y2="383.5" /><line x1="433" y1="393.5" x2="433" y2="398.0" /><line x1="434" y1="379.3" x2="434" y2="383.5" /><line x1="435" y1="393.5" x2="435" y2="397.1" /><line x1="436" y1="380.1" x2="436" y2="383.5" /><line x1="437" y1="393.5" x2="437" y2="397.6" /><line x1="438" y1="378.4" x2="438" y2="383.5" /><line x1="439" y1="393.5" x2="439" y2="395.6" /><line x1="440" y1="381.6" x2="440" y2="383.5" /><line x1="441" y1="393.5" x2="441" y2="398.0" /><line x1="442" y1="378.3" x2="442" y2="383.5" /><line x1="443" y1="393.5" x2="443" y2="397.1" /><line x1="444" y1="380.2" x2="444" y2="383.5" /><line x1="445" y1="393.5" x2="445" y2="397.9" /><line x1="446" y1="381.3" x2="446" y2="383.5" /><line x1="447" y1="393.5" x2="447" y2="396.1" /><line x1="448" y1="381.2" x2="448" y2="383.5" /><line x1="449" y1="393.5" x2="449" y2="397.3" /><line x1="450" y1="380.7" x2="450" y2="383.5" /><line x1="451" y1="393.5" x2="451" y2="395.9" /><line x1="452" y1="379.2" x2="452" y2="383.5" /><line x1="453" y1="393.5" x2="453" y2="398.8" /><line x1="454" y1="380.8" x2="454" y2="383.5" /><line x1="455" y1="393.5" x2="455" y2="397.8" /><line x1="456" y1="380.3" x2="456" y2="383.5" /><line x1="457" y1="393.5" x2="457" y2="398.4" /><line x1="458" y1="379.7" x2="458" y2="383.5" /><line x1="459" y1="393.5" x2="459" y2="396.1" /><line x1="460" y1="381.1" x2="460" y2="383.5" /><line x1="461" y1="393.5" x2="461" y2="395.1" /><line x1="462" y1="380.1" x2="462" y2="383.5" /><line x1="463" y1="393.5" x2="463" y2="396.5" /><line x1="464" y1="381.3" x2="464" y2="383.5" /><line x1="465" y1="393.5" x2="465" y2="396.4" /><line x1="466" y1="380.7" x2="466" y2="383.5" /><line x1="467" y1="393.5" x2="467" y2="398.1" /><line x1="468" y1="381.4" x2="468" y2="383.5" /><line x1="469" y1="393.5" x2="469" y2="399.0" /><line x1="470" y1="380.1" x2="470" y2="383.5" /><line x1="471" y1="393.5" x2="471" y2="397.4" /><line x1="472" y1="380.1" x2="472" y2="383.5" /><line x1="473" y1="393.5" x2="473" y2="398.3" /><line x1="474" y1="378.7" x2="474" y2="383.5" /><line x1="475" y1="393.5" x2="475" y2="397.2" /><line x1="476" y1="380.1" x2="476" y2="383.5" /><line x1="477" y1="393.5" x2="477" y2="397.9" /><line x1="478" y1="378.6" x2="478" y2="383.5" /><line x1="479" y1="393.5" x2="479" y2="396.6" /><line x1="480" y1="379.1" x2="480" y2="383.5" /><line x1="481" y1="393.5" x2="481" y2="398.8" /><line x1="482" y1="380.1" x2="482" y2="383.5" /><line x1="483" y1="393.5" x2="483" y2="395.9" /><line x1="484" y1="381.1" x2="484" y2="383.5" /><line x1="485" y1="393.5" x2="485" y2="397.9" /><line x1="486" y1="379.3" x2="486" y2="383.5" /><line x1="487" y1="393.5" x2="487" y2="398.8" /><line x1="488" y1="378.6" x2="488" y2="383.5" /><line x1="489" y1="393.5" x2="489" y2="396.0" /><line x1="490" y1="381.2" x2="490" y2="383.5" /><line x1="491" y1="393.5" x2="491" y2="396.0" /><line x1="492" y1="381.3" x2="492" y2="383.5" /><line x1="493" y1="393.5" x2="493" y2="397.8" /><line x1="494" y1="378.6" x2="494" y2="383.5" /><line x1="495" y1="393.5" x2="495" y2="398.6" /><line x1="496" y1="381.0" x2="496" y2="383.5" /><line x1="497" y1="393.5" x2="497" y2="398.5" /><line x1="498" y1="380.7" x2="498" y2="383.5" /><line x1="499" y1="393.5" x2="499" y2="396.7" /><line x1="500" y1="379.1" x2="500" y2="383.5" /><line x1="501" y1="393.5" x2="501" y2="395.3" /><line x1="502" y1="381.6" x2="502" y2="383.5" /><line x1="503" y1="393.5" x2="503" y2="398.3" /><line x1="504" y1="380.8" x2="504" y2="383.5" /><line x1="505" y1="393.5" x2="505" y2="396.4" /><line x1="506" y1="379.7" x2="506" y2="383.5" /><line x1="507" y1="393.5" x2="507" y2="397.7" /><line x1="508" y1="382.0" x2="508" y2="383.5" /><line x1="509" y1="393.5" x2="509" y2="396.3" /><line x1="510" y1="380.3" x2="510" y2="383.5" /><line x1="511" y1="393.5" x2="511" y2="396.9" /><line x1="512" y1="381.2" x2="512" y2="383.5" /><line x1="513" y1="393.5" x2="513" y2="397.3" /><line x1="514" y1="378.2" x2="514" y2="383.5" /><line x1="515" y1="393.5" x2="515" y2="396.6" /><line x1="516" y1="379.8" x2="516" y2="383.5" /><line x1="517" y1="393.5" x2="517" y2="395.5" /><line x1="518" y1="380.9" x2="518" y2="383.5" /><line x1="519" y1="393.5" x2="519" y2="397.7" /><line x1="520" y1="381.5" x2="520" y2="383.5" /><line x1="521" y1="393.5" x2="521" y2="398.5" /><line x1="522" y1="378.4" x2="522" y2="383.5" /><line x1="523" y1="393.5" x2="523" y2="395.4" /><line x1="524" y1="378.2" x2="524" y2="383.5" /><line x1="525" y1="393.5" x2="525" y2="396.5" /><line x1="526" y1="378.9" x2="526" y2="383.5" /><line x1="527" y1="393.5" x2="527" y2="398.0" /><line x1="528" y1="380.8" x2="528" y2="383.5" /><line x1="529" y1="393.5" x2="529" y2="397.7" /><line x1="530" y1="379.4" x2="530" y2="383.5" /><line x1="531" y1="393.5" x2="531" y2="398.2" /><line x1="532" y1="380.9" x2="532" y2="383.5" /><line x1="533" y1="393.5" x2="533" y2="398.0" /><line x1="534" y1="378.2" x2="534" y2="383.5" /><line x1="535" y1="393.5" x2="535" y2="397.7" /><line x1="536" y1="379.9" x2="536" y2="383.5" /><line x1="537" y1="393.5" x2="537" y2="395.5" /><line x1="538" y1="380.0" x2="538" y2="383.5" /><line x1="539" y1="393.5" x2="539" y2="396.4" /><line x1="540" y1="379.1" x2="540" y2="383.5" /><line x1="541" y1="393.5" x2="541" y2="397.7" /><line x1="542" y1="379.7" x2="542" y2="383.5" /><line x1="543" y1="393.5" x2="543" y2="395.7" /><line x1="544" y1="379.4" x2="544" y2="383.5" /><line x1="545" y1="393.5" x2="545" y2="397.5" /><line x1="546" y1="381.3" x2="546" y2="383.5" /><line x1="547" y1="393.5" x2="547" y2="398.6" /><line x1="548" y1="379.4" x2="548" y2="383.5" /><line x1="549" y1="393.5" x2="549" y2="395.5" /><line x1="550" y1="378.3" x2="550" y2="383.5" /><line x1="551" y1="393.5" x2="551" y2="395.6" /><line x1="552" y1="380.7" x2="552" y2="383.5" /><line x1="553" y1="393.5" x2="553" y2="397.9" /><line x1="554" y1="379.6" x2="554" y2="383.5" /><line x1="555" y1="393.5" x2="555" y2="397.2" /><line x1="556" y1="379.4" x2="556" y2="383.5" /><line x1="557" y1="393.5" x2="557" y2="396.8" /><line x1="558" y1="380.8" x2="558" y2="383.5" /><line x1="559" y1="393.5" x2="559" y2="395.7" /><line x1="560" y1="381.7" x2="560" y2="383.5" /><line x1="561" y1="393.5" x2="561" y2="397.9" /><line x1="562" y1="379.0" x2="562" y2="383.5" /><line x1="563" y1="393.5" x2="563" y2="397.2" /><line x1="564" y1="379.0" x2="564" y2="383.5" /><line x1="565" y1="393.5" x2="565" y2="396.4" /><line x1="566" y1="380.9" x2="566" y2="383.5" /><line x1="567" y1="393.5" x2="567" y2="396.5" /><line x1="568" y1="378.5" x2="568" y2="383.5" /><line x1="569" y1="393.5" x2="569" y2="395.2" /><line x1="570" y1="380.0" x2="570" y2="383.5" /><line x1="571" y1="393.5" x2="571" y2="396.0" /><line x1="572" y1="378.9" x2="572" y2="383.5" /><line x1="573" y1="393.5" x2="573" y2="396.4" /><line x1="574" y1="380.7" x2="574" y2="383.5" /><line x1="575" y1="393.5" x2="575" y2="396.6" /><line x1="576" y1="379.8" x2="576" y2="383.5" /><line x1="577" y1="393.5" x2="577" y2="398.1" /><line x1="578" y1="380.6" x2="578" y2="383.5" /><line x1="579" y1="393.5" x2="579" y2="398.4" /><line x1="580" y1="381.6" x2="580" y2="383.5" /><line x1="581" y1="393.5" x2="581" y2="396.1" /><line x1="582" y1="381.6" x2="582" y2="383.5" /><line x1="583" y1="393.5" x2="583" y2="395.5" /><line x1="584" y1="378.9" x2="584" y2="383.5" /><line x1="585" y1="393.5" x2="585" y2="397.9" /><line x1="586" y1="381.3" x2="586" y2="383.5" /><line x1="587" y1="393.5" x2="587" y2="395.8" /><line x1="588" y1="380.3" x2="588" y2="383.5" /><line x1="589" y1="393.5" x2="589" y2="398.0" /><line x1="590" y1="378.7" x2="590" y2="383.5" /><line x1="591" y1="393.5" x2="591" y2="398.0" /><line x1="592" y1="379.6" x2="592" y2="383.5" /><line x1="593" y1="393.5" x2="593" y2="395.6" /><line x1="594" y1="380.4" x2="594" y2="383.5" /><line x1="595" y1="393.5" x2="595" y2="395.8" /><line x1="596" y1="379.9" x2="596" y2="383.5" /><line x1="597" y1="393.5" x2="597" y2="397.3" /><line x1="598" y1="381.2" x2="598" y2="383.5" /><line x1="599" y1="393.5" x2="599" y2="396.0" /><line x1="600" y1="378.9" x2="600" y2="383.5" /><line x1="601" y1="393.5" x2="601" y2="395.1" /><line x1="602" y1="378.8" x2="602" y2="383.5" /><line x1="603" y1="393.5" x2="603" y2="398.6" /><line x1="604" y1="378.2" x2="604" y2="383.5" /><line x1="605" y1="393.5" x2="605" y2="396.5" /><line x1="606" y1="379.8" x2="606" y2="383.5" /><line x1="607" y1="393.5" x2="607" y2="397.3" /><line x1="608" y1="379.5" x2="608" y2="383.5" /><line x1="609" y1="393.5" x2="609" y2="398.9" /><line x1="610" y1="379.3" x2="610" y2="383.5" /><line x1="611" y1="393.5" x2="611" y2="396.2" /><line x1="612" y1="378.6" x2="612" y2="383.5" /><line x1="613" y1="393.5" x2="613" y2="396.9" /><line x1="614" y1="379.6" x2="614" y2="383.5" /><line x1="615" y1="393.5" x2="615" y2="397.9" /><line x1="616" y1="382.0" x2="616" y2="383.5" /><line x1="617" y1="393.5" x2="617" y2="398.1" /><line x1="618" y1="379.4" x2="618" y2="383.5" /><line x1="619" y1="393.5" x2="619" y2="397.0" /><line x1="620" y1="379.9" x2="620" y2="383.5" /><line x1="621" y1="393.5" x2="621" y2="396.8" /><line x1="622" y1="381.2" x2="622" y2="383.5" /><line x1="623" y1="393.5" x2="623" y2="397.1" /><line x1="624" y1="381.9" x2="624" y2="383.5" /><line x1="625" y1="393.5" x2="625" y2="397.0" /><line x1="626" y1="379.4" x2="626" y2="383.5" /><line x1="627" y1="393.5" x2="627" y2="396.8" /><line x1="628" y1="379.7" x2="628" y2="383.5" /><line x1="629" y1="393.5" x2="629" y2="398.8" /><line x1="630" y1="378.4" x2="630" y2="383.5" /><line x1="631" y1="393.5" x2="631" y2="395.5" /><line x1="632" y1="378.8" x2="632" y2="383.5" /><line x1="633" y1="393.5" x2="633" y2="397.5" /><line x1="634" y1="381.8" x2="634" y2="383.5" /><line x1="635" y1="393.5" x2="635" y2="396.4" /><line x1="636" y1="381.1" x2="636" y2="383.5" /><line x1="637" y1="393.5" x2="637" y2="395.3" /><line x1="638" y1="379.8" x2="638" y2="383.5" /><line x1="639" y1="393.5" x2="639" y2="398.7" /><line x1="640" y1="380.7" x2="640" y2="383.5" /><line x1="641" y1="393.5" x2="641" y2="398.5" /><line x1="642" y1="379.2" x2="642" y2="383.5" /><line x1="643" y1="393.5" x2="643" y2="395.5" /><line x1="644" y1="378.6" x2="644" y2="383.5" /><line x1="645" y1="393.5" x2="645" y2="397.4" /><line x1="646" y1="378.3" x2="646" y2="383.5" /><line x1="647" y1="393.5" x2="647" y2="397.9" /><line x1="648" y1="379.0" x2="648" y2="383.5" /><line x1="649" y1="393.5" x2="649" y2="396.4" /><line x1="650" y1="378.8" x2="650" y2="383.5" /><line x1="651" y1="393.5" x2="651" y2="398.7" /><line x1="652" y1="378.6" x2="652" y2="383.5" /><line x1="653" y1="393.5" x2="653" y2="396.7" /><line x1="654" y1="379.0" x2="654" y2="383.5" /><line x1="655" y1="393.5" x2="655" y2="396.9" /><line x1="656" y1="381.6" x2="656" y2="383.5" /><line x1="657" y1="393.5" x2="657" y2="395.2" /><line x1="658" y1="381.7" x2="658" y2="383.5" /><line x1="659" y1="393.5" x2="659" y2="395.8" /><line x1="660" y1="381.4" x2="660" y2="383.5" /><line x1="661" y1="393.5" x2="661" y2="397.0" /><line x1="662" y1="379.2" x2="662" y2="383.5" /><line x1="663" y1="393.5" x2="663" y2="397.1" /><line x1="664" y1="380.3" x2="664" y2="383.5" /><line x1="665" y1="393.5" x2="665" y2="397.6" /><line x1="666" y1="380.8" x2="666" y2="383.5" /><line x1="667" y1="393.5" x2="667" y2="396.9" /><line x1="668" y1="379.0" x2="668" y2="383.5" /><line x1="669" y1="393.5" x2="669" y2="396.6" /><line x1="670" y1="381.3" x2="670" y2="383.5" /><line x1="671" y1="393.5" x2="671" y2="398.6" /><line x1="672" y1="379.1" x2="672" y2="383.5" /><line x1="673" y1="393.5" x2="673" y2="396.5" /><line x1="674" y1="380.5" x2="674" y2="383.5" /><line x1="675" y1="393.5" x2="675" y2="397.1" /><line x1="676" y1="379.6" x2="676" y2="383.5" /><line x1="677" y1="393.5" x2="677" y2="395.9" /><line x1="678" y1="382.0" x2="678" y2="383.5" /><line x1="679" y1="393.5" x2="679" y2="395.8" /><line x1="680" y1="378.9" x2="680" y2="383.5" /><line x1="681" y1="393.5" x2="681" y2="395.6" /><line x1="682" y1="380.2" x2="682" y2="383.5" /><line x1="683" y1="393.5" x2="683" y2="395.8" /><line x1="684" y1="381.2" x2="684" y2="383.5" /><line x1="685" y1="393.5" x2="685" y2="395.7" /><line x1="686" y1="380.4" x2="686" y2="383.5" /><line x1="687" y1="393.5" x2="687" y2="395.7" /><line x1="688" y1="381.9" x2="688" y2="383.5" /><line x1="689" y1="393.5" x2="689" y2="395.4" /><line x1="690" y1="381.3" x2="690" y2="383.5" /><line x1="691" y1="393.5" x2="691" y2="397.0" /><line x1="692" y1="381.8" x2="692" y2="383.5" /><line x1="693" y1="393.5" x2="693" y2="395.1" /><line x1="694" y1="380.2" x2="694" y2="383.5" /><line x1="695" y1="393.5" x2="695" y2="396.6" /><line x1="696" y1="379.2" x2="696" y2="383.5" /><line x1="697" y1="393.5" x2="697" y2="395.2" /><line x1="698" y1="380.4" x2="698" y2="383.5" /><line x1="699" y1="393.5" x2="699" y2="396.6" /><line x1="700" y1="381.9" x2="700" y2="383.5" /><line x1="701" y1="393.5" x2="701" y2="398.9" /><line x1="702" y1="381.1" x2="702" y2="383.5" /><line x1="703" y1="393.5" x2="703" y2="395.4" /><line x1="704" y1="380.1" x2="704" y2="383.5" /><line x1="705" y1="393.5" x2="705" y2="395.7" /><line x1="706" y1="379.5" x2="706" y2="383.5" /><line x1="707" y1="393.5" x2="707" y2="396.4" /><line x1="708" y1="381.5" x2="708" y2="383.5" /><line x1="709" y1="393.5" x2="709" y2="395.2" /><line x1="710" y1="379.1" x2="710" y2="383.5" /><line x1="711" y1="393.5" x2="711" y2="396.1" /><line x1="712" y1="378.8" x2="712" y2="383.5" /><line x1="713" y1="393.5" x2="713" y2="396.9" /><line x1="714" y1="378.3" x2="714" y2="383.5" /><line x1="715" y1="393.5" x2="715" y2="396.2" /><line x1="716" y1="381.0" x2="716" y2="383.5" /><line x1="717" y1="393.5" x2="717" y2="396.1" /><line x1="718" y1="378.7" x2="718" y2="383.5" /><line x1="719" y1="393.5" x2="719" y2="397.5" /><line x1="720" y1="380.6" x2="720" y2="383.5" /><line x1="721" y1="393.5" x2="721" y2="395.4" /><line x1="722" y1="379.3" x2="722" y2="383.5" /><line x1="723" y1="393.5" x2="723" y2="398.9" /><line x1="724" y1="379.6" x2="724" y2="383.5" /><line x1="725" y1="393.5" x2="725" y2="395.0" /><line x1="726" y1="381.9" x2="726" y2="383.5" /><line x1="727" y1="393.5" x2="727" y2="395.4" /><line x1="728" y1="381.3" x2="728" y2="383.5" /><line x1="729" y1="393.5" x2="729" y2="395.1" /><line x1="730" y1="381.8" x2="730" y2="383.5" /><line x1="731" y1="393.5" x2="731" y2="397.6" /><line x1="732" y1="378.4" x2="732" y2="383.5" /><line x1="733" y1="393.5" x2="733" y2="395.8" /><line x1="734" y1="378.1" x2="734" y2="383.5" /><line x1="735" y1="393.5" x2="735" y2="396.9" /><line x1="736" y1="378.8" x2="736" y2="383.5" /><line x1="737" y1="393.5" x2="737" y2="398.7" /><line x1="738" y1="378.2" x2="738" y2="383.5" /><line x1="739" y1="393.5" x2="739" y2="395.1" /><line x1="740" y1="380.8" x2="740" y2="383.5" /><line x1="741" y1="393.5" x2="741" y2="397.4" /><line x1="742" y1="378.2" x2="742" y2="383.5" /><line x1="743" y1="393.5" x2="743" y2="395.4" /><line x1="744" y1="380.8" x2="744" y2="383.5" /><line x1="745" y1="393.5" x2="745" y2="398.4" /><line x1="746" y1="381.5" x2="746" y2="383.5" /><line x1="747" y1="393.5" x2="747" y2="396.6" /><line x1="748" y1="380.7" x2="748" y2="383.5" /><line x1="749" y1="393.5" x2="749" y2="397.7" /><line x1="750" y1="378.3" x2="750" y2="383.5" /><line x1="751" y1="393.5" x2="751" y2="395.7" /><line x1="752" y1="379.0" x2="752" y2="383.5" /><line x1="753" y1="393.5" x2="753" y2="397.9" /><line x1="754" y1="378.7" x2="754" y2="383.5" /><line x1="755" y1="393.5" x2="755" y2="397.2" /><line x1="756" y1="378.3" x2="756" y2="383.5" /><line x1="757" y1="393.5" x2="757" y2="396.5" /><line x1="758" y1="380.3" x2="758" y2="383.5" /><line x1="759" y1="393.5" x2="759" y2="395.9" /><line x1="760" y1="378.9" x2="760" y2="383.5" /><line x1="761" y1="393.5" x2="761" y2="396.9" /><line x1="762" y1="380.9" x2="762" y2="383.5" /><line x1="763" y1="393.5" x2="763" y2="395.7" /><line x1="764" y1="379.1" x2="764" y2="383.5" /><line x1="765" y1="393.5" x2="765" y2="397.4" /><line x1="766" y1="379.2" x2="766" y2="383.5" /><line x1="767" y1="393.5" x2="767" y2="396.5" /><line x1="768" y1="380.1" x2="768" y2="383.5" /><line x1="769" y1="393.5" x2="769" y2="395.6" /><line x1="770" y1="379.2" x2="770" y2="383.5" /><line x1="771" y1="393.5" x2="771" y2="395.1" /><line x1="772" y1="380.1" x2="772" y2="383.5" /><line x1="773" y1="393.5" x2="773" y2="398.0" /><line x1="774" y1="379.3" x2="774" y2="383.5" /><line x1="775" y1="393.5" x2="775" y2="395.4" /><line x1="776" y1="381.1" x2="776" y2="383.5" /><line x1="777" y1="393.5" x2="777" y2="398.4" /><line x1="778" y1="379.4" x2="778" y2="383.5" /><line x1="779" y1="393.5" x2="779" y2="398.5" /><line x1="780" y1="378.5" x2="780" y2="383.5" /><line x1="781" y1="393.5" x2="781" y2="396.8" /><line x1="782" y1="378.4" x2="782" y2="383.5" /><line x1="783" y1="393.5" x2="783" y2="397.9" /><line x1="784" y1="380.7" x2="784" y2="383.5" /><line x1="785" y1="393.5" x2="785" y2="396.5" /><line x1="786" y1="381.7" x2="786" y2="383.5" /><line x1="787" y1="393.5" x2="787" y2="396.6" /><line x1="788" y1="378.2" x2="788" y2="383.5" /><line x1="789" y1="393.5" x2="789" y2="395.4" /><line x1="790" y1="379.7" x2="790" y2="383.5" /><line x1="791" y1="393.5" x2="791" y2="395.4" /><line x1="792" y1="381.7" x2="792" y2="383.5" /><line x1="793" y1="393.5" x2="793" y2="397.6" /><line x1="794" y1="381.0" x2="794" y2="383.5" /><line x1="795" y1="393.5" x2="795" y2="395.2" /><line x1="796" y1="381.4" x2="796" y2="383.5" /><line x1="797" y1="393.5" x2="797" y2="397.6" /><line x1="798" y1="379.7" x2="798" y2="383.5" /><line x1="799" y1="393.5" x2="799" y2="395.0" /><line x1="800" y1="381.1" x2="800" y2="383.5" /><line x1="801" y1="393.5" x2="801" y2="398.9" /><line x1="802" y1="381.1" x2="802" y2="383.5" /><line x1="803" y1="393.5" x2="803" y2="397.2" /><line x1="804" y1="380.3" x2="804" y2="383.5" /><line x1="805" y1="393.5" x2="805" y2="398.1" /><line x1="806" y1="379.6" x2="806" y2="383.5" /><line x1="807" y1="393.5" x2="807" y2="398.2" /><line x1="808" y1="379.9" x2="808" y2="383.5" /><line x1="809" y1="393.5" x2="809" y2="395.8" /><line x1="810" y1="381.3" x2="810" y2="383.5" /><line x1="811" y1="393.5" x2="811" y2="395.3" /><line x1="812" y1="378.7" x2="812" y2="383.5" /><line x1="813" y1="393.5" x2="813" y2="395.5" /><line x1="814" y1="381.9" x2="814" y2="383.5" /><line x1="815" y1="393.5" x2="815" y2="398.9" /><line x1="816" y1="381.2" x2="816" y2="383.5" /><line x1="817" y1="393.5" x2="817" y2="398.6" /><line x1="818" y1="381.7" x2="818" y2="383.5" /><line x1="819" y1="393.5" x2="819" y2="396.9" /><line x1="820" y1="381.1" x2="820" y2="383.5" /><line x1="821" y1="393.5" x2="821" y2="398.3" /><line x1="822" y1="379.5" x2="822" y2="383.5" /><line x1="823" y1="393.5" x2="823" y2="397.6" /><line x1="824" y1="379.0" x2="824" y2="383.5" /><line x1="825" y1="393.5" x2="825" y2="398.5" /><line x1="826" y1="380.6" x2="826" y2="383.5" /><line x1="827" y1="393.5" x2="827" y2="397.4" /><line x1="828" y1="380.2" x2="828" y2="383.5" /><line x1="829" y1="393.5" x2="829" y2="395.4" /><line x1="830" y1="378.7" x2="830" y2="383.5" /><line x1="831" y1="393.5" x2="831" y2="397.4" /><line x1="832" y1="378.7" x2="832" y2="383.5" /><line x1="833" y1="393.5" x2="833" y2="395.8" /><line x1="834" y1="379.8" x2="834" y2="383.5" /><line x1="835" y1="393.5" x2="835" y2="396.9" /><line x1="836" y1="379.1" x2="836" y2="383.5" /><line x1="837" y1="393.5" x2="837" y2="395.3" /><line x1="838" y1="380.6" x2="838" y2="383.5" /><line x1="839" y1="393.5" x2="839" y2="396.9" /><line x1="840" y1="381.7" x2="840" y2="383.5" /><line x1="841" y1="393.5" x2="841" y2="397.2" /><line x1="842" y1="379.1" x2="842" y2="383.5" /><line x1="843" y1="393.5" x2="843" y2="396.7" /><line x1="844" y1="379.4" x2="844" y2="383.5" /><line x1="845" y1="393.5" x2="845" y2="397.4" /><line x1="846" y1="381.1" x2="846" y2="383.5" /><line x1="847" y1="393.5" x2="847" y2="396.4" /><line x1="848" y1="378.0" x2="848" y2="383.5" /><line x1="849" y1="393.5" x2="849" y2="396.3" /><line x1="850" y1="380.3" x2="850" y2="383.5" /><line x1="851" y1="393.5" x2="851" y2="395.3" /><line x1="852" y1="381.1" x2="852" y2="383.5" /><line x1="853" y1="393.5" x2="853" y2="395.7" /><line x1="854" y1="378.3" x2="854" y2="383.5" /><line x1="855" y1="393.5" x2="855" y2="397.9" /><line x1="856" y1="378.5" x2="856" y2="383.5" /><line x1="857" y1="393.5" x2="857" y2="398.9" /><line x1="858" y1="379.6" x2="858" y2="383.5" /><line x1="859" y1="393.5" x2="859" y2="398.7" /><line x1="860" y1="379.9" x2="860" y2="383.5" /><line x1="861" y1="393.5" x2="861" y2="396.7" /><line x1="862" y1="378.2" x2="862" y2="383.5" /><line x1="863" y1="393.5" x2="863" y2="398.6" /><line x1="864" y1="378.2" x2="864" y2="383.5" /><line x1="865" y1="393.5" x2="865" y2="396.9" /><line x1="866" y1="378.9" x2="866" y2="383.5" /><line x1="867" y1="393.5" x2="867" y2="396.6" /><line x1="868" y1="378.0" x2="868" y2="383.5" /><line x1="869" y1="393.5" x2="869" y2="398.7" /><line x1="870" y1="380.8" x2="870" y2="383.5" /><line x1="871" y1="393.5" x2="871" y2="398.7" /><line x1="872" y1="381.3" x2="872" y2="383.5" /><line x1="873" y1="393.5" x2="873" y2="395.4" /><line x1="874" y1="379.1" x2="874" y2="383.5" /><line x1="875" y1="393.5" x2="875" y2="396.2" /><line x1="876" y1="379.9" x2="876" y2="383.5" /><line x1="877" y1="393.5" x2="877" y2="397.6" /><line x1="878" y1="381.8" x2="878" y2="383.5" /><line x1="879" y1="393.5" x2="879" y2="398.0" /><line x1="880" y1="380.9" x2="880" y2="383.5" /><line x1="881" y1="393.5" x2="881" y2="396.7" /><line x1="882" y1="380.6" x2="882" y2="383.5" /><line x1="883" y1="393.5" x2="883" y2="398.0" /><line x1="884" y1="379.0" x2="884" y2="383.5" /><line x1="885" y1="393.5" x2="885" y2="396.1" /><line x1="886" y1="381.6" x2="886" y2="383.5" /><line x1="887" y1="393.5" x2="887" y2="396.2" /><line x1="888" y1="380.4" x2="888" y2="383.5" /><line x1="889" y1="393.5" x2="889" y2="395.3" /><line x1="890" y1="381.4" x2="890" y2="383.5" /><line x1="891" y1="393.5" x2="891" y2="398.1" /><line x1="892" y1="379.2" x2="892" y2="383.5" /><line x1="893" y1="393.5" x2="893" y2="398.9" /><line x1="894" y1="378.1" x2="894" y2="383.5" /><line x1="895" y1="393.5" x2="895" y2="398.5" /><line x1="896" y1="380.5" x2="896" y2="383.5" /><line x1="897" y1="393.5" x2="897" y2="395.6" /><line x1="898" y1="380.8" x2="898" y2="383.5" /><line x1="899" y1="393.5" x2="899" y2="396.9" /><line x1="900" y1="379.9" x2="900" y2="383.5" /><line x1="901" y1="393.5" x2="901" y2="397.2" /><line x1="902" y1="380.6" x2="902" y2="383.5" /><line x1="903" y1="393.5" x2="903" y2="398.4" /><line x1="904" y1="380.9" x2="904" y2="383.5" /><line x1="905" y1="393.5" x2="905" y2="396.9" /><line x1="906" y1="378.5" x2="906" y2="383.5" /><line x1="907" y1="393.5" x2="907" y2="398.2" /><line x1="908" y1="380.8" x2="908" y2="383.5" /><line x1="909" y1="393.5" x2="909" y2="396.0" /><line x1="910" y1="378.8" x2="910" y2="383.5" /><line x1="911" y1="393.5" x2="911" y2="395.0" /><line x1="912" y1="381.5" x2="912" y2="383.5" /><line x1="913" y1="393.5" x2="913" y2="397.1" /><line x1="914" y1="379.9" x2="914" y2="383.5" /><line x1="915" y1="393.5" x2="915" y2="395.7" /><line x1="916" y1="381.8" x2="916" y2="383.5" /><line x1="917" y1="393.5" x2="917" y2="395.8" /><line x1="918" y1="378.9" x2="918" y2="383.5" /><line x1="919" y1="393.5" x2="919" y2="396.9" /><line x1="920" y1="378.1" x2="920" y2="383.5" /><line x1="921" y1="393.5" x2="921" y2="398.1" /><line x1="922" y1="378.1" x2="922" y2="383.5" /><line x1="923" y1="393.5" x2="923" y2="395.1" /><line x1="924" y1="381.3" x2="924" y2="383.5" /><line x1="925" y1="393.5" x2="925" y2="395.1" /><line x1="926" y1="380.3" x2="926" y2="383.5" /><line x1="927" y1="393.5" x2="927" y2="396.4" /></g></svg>
<svg style="left:501px;top:154px" width="11" height="8"><path d="M1.5 1 L10.5 1 L6 6.5Z" fill="#f08a28"/></svg>
<svg style="left:501px;top:616px" width="11" height="8"><path d="M1.8 6.5 L9.8 6.5 L5.8 1.5Z" fill="#f0982e"/></svg>
<svg style="left:930px;top:380px" width="26" height="22"><path d="M2 6 L7 2 L7 10Z" fill="#d8d860"/><path d="M6 6 H10 M11 4 V15 M15 5 V13" stroke="#d8d860" stroke-width="1.6"/><path d="M10 16 L12 19 L14 16" stroke="#a8a840" stroke-width="1.2" fill="none"/><path d="M18 2 H23 M20.5 2 V9" stroke="#d8d860" stroke-width="1.3"/></svg>
<svg style="left:363.6px;top:457px" width="18" height="18"><g stroke="#fff" stroke-width="1.3" fill="#fff" stroke-linejoin="round"><path d="M9 2 V16 M2 9 H16"/><path d="M9 0.5 L6.3 3.5 H11.7Z M9 17.5 L6.3 14.5 H11.7Z M0.5 9 L3.5 6.3 V11.7Z M17.5 9 L14.5 6.3 V11.7Z"/></g></svg>
<div class="a" style="left:82px;top:631px;width:12px;height:16px;border-left:1px solid #b8b8b8;border-top:1px solid #b8b8b8"></div>
<svg style="left:85px;top:633px" width="8" height="13"><path d="M3.5 3 V12" stroke="#222" stroke-width="1.6"/><path d="M3.5 0.5 L6 4 L1 4Z" fill="#222"/></svg>
<div class="btn" style="left:102px;top:630px;width:24px;height:11px;border-radius:3px"></div>
<div class="btn" style="left:102px;top:644px;width:24px;height:12px;border-radius:3px"></div>
<div class="btn" style="left:128px;top:630px;width:17px;height:26px;border-radius:3px"></div>
<svg style="left:102px;top:630px" width="44" height="26"><path d="M10 7 L14 3.5 L18 7" stroke="#444" stroke-width="1.8" fill="none"/><path d="M10 18 L14 21.5 L18 18" stroke="#444" stroke-width="1.8" fill="none"/><path d="M32.5 8 L36.5 4 L40.5 8" stroke="#444" stroke-width="1.8" fill="none"/><path d="M32.5 17 L36.5 21 L40.5 17" stroke="#444" stroke-width="1.8" fill="none"/></svg>
<div class="btn" style="left:162px;top:630px;width:23px;height:25px;background:linear-gradient(#ffffff,#f8f8f8);border-color:#a8a8a8"></div>
<svg style="left:165px;top:634px" width="17" height="17"><path d="M5 1 H12 L16 5 V12 L12 16 H5 L1 12 V5Z" fill="#18a8b0" stroke="#3a3a3a" stroke-width="1"/></svg>
<div class="btn" style="left:188px;top:630px;width:23px;height:25px;background:linear-gradient(#fdfdfd,#ececec 50%,#d6d6d6);border-color:#a8a8a8"></div>
<svg style="left:191px;top:634px" width="17" height="17"><path d="M5 1 H12 L16 5 V12 L12 16 H5 L1 12 V5Z" fill="#e8141c" stroke="#3a3a3a" stroke-width="1"/></svg>
<div class="btn" style="left:213px;top:630px;width:23px;height:25px;background:linear-gradient(#fdfdfd,#ececec 50%,#d6d6d6);border-color:#a8a8a8"></div>
<svg style="left:216px;top:634px" width="17" height="17"><path d="M5 1 H12 L16 5 V12 L12 16 H5 L1 12 V5Z" fill="#f2e21a" stroke="#3a3a3a" stroke-width="1"/></svg>
<div class="btn" style="left:249px;top:630px;width:23px;height:25px"></div>
<div class="btn" style="left:275px;top:630px;width:23px;height:25px"></div>
<div class="btn" style="left:300px;top:630px;width:23px;height:25px"></div>
<svg style="left:252px;top:633px" width="18" height="19"><rect x="1" y="2" width="16" height="15" fill="#fafafa" stroke="#2a2a2a" stroke-width="1.8"/><path d="M2 16 L9 11 L16 16Z" fill="#9a9a9a"/><path d="M4 7 Q9 4 12 10" stroke="#222" stroke-width="1.8" fill="none"/><path d="M14.5 12 L9.5 11 L13.5 7Z" fill="#222"/></svg>
<svg style="left:277px;top:634px" width="19" height="17"><path d="M1 9 L10 4 L18 8 L18 12 L9 17 L1 12Z" fill="#6a6a6a"/><path d="M1 9 L10 4 L18 8 L9 13Z" fill="#a8a8a8"/><path d="M7 2 L13 1 L15 6 L10 8Z" fill="#f4f4f4" stroke="#777" stroke-width=".7"/></svg>
<svg style="left:302px;top:633px" width="19" height="19"><circle cx="9.5" cy="9.5" r="4" fill="#f0e018" stroke="#888" stroke-width=".8"/><g stroke="#9a9a6a" stroke-width="1.3"><path d="M9.5 0.5 V3.5 M9.5 15.5 V18.5 M0.5 9.5 H3.5 M15.5 9.5 H18.5 M3 3 L5 5 M14 14 L16 16 M3 16 L5 14 M14 5 L16 3"/></g></svg>
<div class="chb" style="left:337px;top:631px;width:23px;height:24px;background:#151515"></div>
<div class="t" style="left:337px;top:634px;width:23px;text-align:center;font-size:17px;color:#f2f2f2">H</div>
<div class="blk" style="left:361px;top:629px;width:94px;height:29px"></div>
<div class="t" style="left:367px;top:634px;font-size:15px;color:#eaeaea;-webkit-text-stroke:0.35px #eaeaea">500 ns/</div>
<div class="btn" style="left:457px;top:629px;width:18px;height:28px"></div>
<div class="btn" style="left:477px;top:629px;width:18px;height:28px"></div>
<svg style="left:457px;top:629px" width="38" height="28"><path d="M5.7 13.8 Q6 8.5 7.8 10.5 Q9 12 9.5 17 Q10.3 21 11.8 13.8" stroke="#3a3a3a" stroke-width="1.6" fill="none"/><path d="M22.3 14.5 Q25 7.5 28 11.5 Q30.5 15 31.7 18.5 Q33.5 21 34.5 13.8" stroke="#3a3a3a" stroke-width="1.6" fill="none"/></svg>
<div class="a" style="left:499px;top:632px;width:14px;height:14px;background:#ee8c2c"></div>
<svg style="left:501px;top:633px" width="10" height="13"><path d="M5 4 V12" stroke="#3a1a08" stroke-width="2"/><circle cx="5" cy="3.5" r="2.3" fill="#3a1a08"/></svg>
<div class="blk" style="left:517px;top:629px;width:141px;height:29px"></div>
<div class="t" style="left:523px;top:633px;font-family:Liberation Serif,serif;font-size:17px;font-weight:bold;color:#cfcfcf">0.0 s</div>
<div class="btn" style="left:660px;top:629px;width:17px;height:28px"></div>
<div class="btn" style="left:679px;top:629px;width:17px;height:28px"></div>
<div class="btn" style="left:699px;top:629px;width:17px;height:28px"></div>
<svg style="left:660px;top:629px" width="56" height="28"><path d="M6 14 L11 9 V19Z" fill="#111"/><path d="M45 9 L50 14 L45 19Z" fill="#111"/></svg>
<div class="t" style="left:679px;top:636px;width:17px;text-align:center;font-size:14px;font-weight:bold;color:#111">0</div>
<div class="chb" style="left:780px;top:631px;width:22px;height:24px;background:#0a0a0a"></div>
<div class="t" style="left:780px;top:634px;width:22px;text-align:center;font-size:17px;color:#e2de4c;-webkit-text-stroke:0.3px #e2de4c">T</div>
<div class="blk" style="left:805px;top:629px;width:81px;height:29px"></div>
<div class="t" style="left:811px;top:634px;font-size:15px;color:#e2de4c;-webkit-text-stroke:0.35px #e2de4c">0.0 V</div>
<div class="btn" style="left:888px;top:630px;width:24px;height:12px"></div>
<div class="btn" style="left:888px;top:645px;width:24px;height:12px"></div>
<svg style="left:888px;top:630px" width="24" height="27"><path d="M7 8.5 L12 4 L17 8.5Z" fill="#111"/><path d="M7 19 L12 23.5 L17 19Z" fill="#111"/></svg>
<div class="a" style="left:920px;top:632px;width:14px;height:15px;border-left:1px solid #c0c0c0;border-top:1px solid #c0c0c0"></div>
<svg style="left:923px;top:633px" width="8" height="13"><path d="M3.5 3 V12" stroke="#222" stroke-width="1.5"/><path d="M3.5 0.5 L6 4 L1 4Z" fill="#222"/></svg>
<div class="a" style="left:83px;top:663px;width:52px;height:23px;background:#2c2c2c"></div>
<div class="a" style="left:135px;top:663px;width:51px;height:23px;background:#f4f4f3"></div>
<div class="t" style="left:89px;top:668px;font-size:14.5px;color:#f4f4f4;-webkit-text-stroke:0.25px #f4f4f4">Status</div>
<div class="t" style="left:140px;top:667px;font-size:14px;color:#333">Scales</div>
<div class="a" style="left:185px;top:664px;width:1px;height:21px;background:#7a7a7a"></div>
<div class="m" style="left:102px;top:690px;font-size:14px;color:#dc8a3c;-webkit-text-stroke:0.35px #dc8a3c">Acquisition:</div>
<div class="m" style="left:102px;top:707px;font-size:14px;color:#e8e8e8;-webkit-text-stroke:0.4px #e8e8e8">Sampling Mode  Real Time</div>
<div class="m" style="left:102px;top:724px;font-size:14px;color:#e8e8e8;-webkit-text-stroke:0.4px #e8e8e8">Capture Time   6.55 μs</div>
<div class="m" style="left:634px;top:690px;font-size:14px;color:#dc8a3c;-webkit-text-stroke:0.35px #dc8a3c">Trigger:</div>
<div class="m" style="left:634px;top:707px;font-size:14px;color:#e8e8e8;-webkit-text-stroke:0.4px #e8e8e8">Mode</div>
<div class="m" style="left:742px;top:707px;font-size:14px;color:#e8e8e8;-webkit-text-stroke:0.4px #e8e8e8">Edge (↑)</div>
<div class="m" style="left:634px;top:740px;font-size:14px;color:#e8e8e8;-webkit-text-stroke:0.4px #e8e8e8">InfiniiScan</div>
<div class="m" style="left:742px;top:740px;font-size:14px;color:#e8e8e8;-webkit-text-stroke:0.4px #e8e8e8">Off</div>
<div class="btn" style="left:943px;top:687px;width:18px;height:24px;border-color:#b0b0b0;border-radius:2px"></div>
<div class="t" style="left:943px;top:690px;width:18px;text-align:center;font-size:17px;font-weight:bold;color:#3a3a3a">?</div>
<div class="a" style="left:18px;top:85px;width:43px;height:43px;background:#060606;box-shadow:1px 1px 0 #bbb,2px 2px 0 #ddd"></div>
<div class="mb" style="top:150px"></div>
<svg style="left:14px;top:150px" width="53" height="53"><path d="M3.5 38.8 H13 L38.4 5.4 H48" stroke="#e2e2e2" stroke-width="1.7" fill="none"/><path d="M10.7 34.5 H20.7 M14.7 37.0 L16.7 32.0" stroke="#e48a30" stroke-width="1.5"/><path d="M31.0 8.3 H42.0 M35.5 10.8 L37.5 5.800000000000001" stroke="#e48a30" stroke-width="1.5"/><path d="M18.4 44.8 H33.5" stroke="#e48a30" stroke-width="2"/><path d="M15.4 44.8 L21.4 40.8 V48.8Z M36.5 44.8 L30.5 40.8 V48.8Z" fill="#e48a30"/></svg>
<div class="a" style="left:10px;top:205px;width:60px;height:1px;background:#b4b4b4"></div>
<div class="mb" style="top:209px"></div>
<svg style="left:14px;top:209px" width="53" height="53"><path d="M3.5 4.3 H12.2 L38.4 38.2 H48" stroke="#e2e2e2" stroke-width="1.7" fill="none"/><path d="M9.8 8 H20.8 M14.3 10.5 L16.3 5.5" stroke="#e48a30" stroke-width="1.5"/><path d="M30.5 34.2 H41.5 M35 36.7 L37 31.700000000000003" stroke="#e48a30" stroke-width="1.5"/><path d="M18.4 44 H33.5" stroke="#e48a30" stroke-width="2"/><path d="M15.4 44 L21.4 40 V48Z M36.5 44 L30.5 40 V48Z" fill="#e48a30"/></svg>
<div class="a" style="left:10px;top:264px;width:60px;height:1px;background:#b4b4b4"></div>
<div class="mb" style="top:268px"></div>
<svg style="left:14px;top:268px" width="53" height="53"><path d="M3.5 36.6 H16.2 V4 H32 V36.6 H41.6 V4 Q42 4 44 4 H48" stroke="#e2e2e2" stroke-width="1.7" fill="none"/><path d="M9.7 19.1 H21.7 M14.7 21.6 L16.7 16.6" stroke="#e48a30" stroke-width="1.5"/><path d="M36.0 19.1 H48.0 M41 21.6 L43 16.6" stroke="#e48a30" stroke-width="1.5"/><path d="M19.2 44.2 H38.6" stroke="#e48a30" stroke-width="2"/><path d="M16.2 44.2 L22.2 40.2 V48.2Z M41.6 44.2 L35.6 40.2 V48.2Z" fill="#e48a30"/></svg>
<div class="a" style="left:10px;top:323px;width:60px;height:1px;background:#b4b4b4"></div>
<div class="mb" style="top:327px"></div>
<svg style="left:14px;top:327px" width="53" height="53"><path d="M3.5 36.6 H16.2 V4 H32 V36.6 H41.6 V4 Q42 4 44 4 H48" stroke="#e2e2e2" stroke-width="1.7" fill="none"/><path d="M9.7 19.9 H21.7 M14.7 22.4 L16.7 17.4" stroke="#e48a30" stroke-width="1.5"/><path d="M36.0 19.9 H48.0 M41 22.4 L43 17.4" stroke="#e48a30" stroke-width="1.5"/><path d="M19.2 44.5 H38.6" stroke="#e48a30" stroke-width="2"/><path d="M16.2 44.5 L22.2 40.5 V48.5Z M41.6 44.5 L35.6 40.5 V48.5Z" fill="#e48a30"/><text x="1.5" y="49" font-family="Liberation Serif" font-size="14.5" font-weight="bold" fill="#e48a30" letter-spacing="0.5">1/</text></svg>
<div class="a" style="left:10px;top:382px;width:60px;height:1px;background:#b4b4b4"></div>
<div class="mb" style="top:386px"></div>
<svg style="left:14px;top:386px" width="53" height="53"><path d="M15 33.4 Q19 30 23 36 Q26 37 28 35 V9 Q29 5.5 32 6.5 L37 9.5 H46 V33.4 H49" stroke="#e2e2e2" stroke-width="1.7" fill="none"/><path d="M8.2 6.8 V37.7" stroke="#e48a30" stroke-width="1.7"/><path d="M8.2 4.8 L4.699999999999999 9.8 H11.7Z" fill="#e48a30"/><path d="M8.2 39.7 L4.699999999999999 34.7 H11.7Z" fill="#e48a30"/><path d="M25.7 4.5 H36 M17.8 39.4 H28.9" stroke="#e48a30" stroke-width="1.5"/></svg>
<div class="a" style="left:10px;top:441px;width:60px;height:1px;background:#b4b4b4"></div>
<div class="mb" style="top:445px"></div>
<svg style="left:14px;top:445px" width="53" height="53"><path d="M15 33.4 Q19 30 23 36 Q26 37 28 35 V9 Q29 5.5 32 6.5 L37 9.5 H46 V33.4 H49" stroke="#e2e2e2" stroke-width="1.7" fill="none"/><path d="M17.8 39.4 H28.9" stroke="#e48a30" stroke-width="1.5"/><path d="M4.5 44.5 L7.8 40.5 L11 44.5Z" fill="#e48a30"/><path d="M3 47.5 H13" stroke="#e48a30" stroke-width="1.6"/></svg>
<div class="a" style="left:10px;top:500px;width:60px;height:1px;background:#b4b4b4"></div>
<div class="mb" style="top:504px"></div>
<svg style="left:14px;top:504px" width="53" height="53"><path d="M15 33.4 Q19 30 23 36 Q26 37 28 35 V9 Q29 5.5 32 6.5 L37 9.5 H46 V33.4 H49" stroke="#e2e2e2" stroke-width="1.7" fill="none"/><path d="M8.2 8.4 V45.7" stroke="#e48a30" stroke-width="1.7"/><path d="M8.2 6.4 L4.699999999999999 11.4 H11.7Z" fill="#e48a30"/><path d="M3.1999999999999993 47.7 H13.2" stroke="#e48a30" stroke-width="1.8"/><path d="M24.9 4.8 H36" stroke="#e48a30" stroke-width="1.5"/></svg>
<div class="a" style="left:10px;top:559px;width:60px;height:1px;background:#b4b4b4"></div>
<div class="mb" style="top:564px"></div>
<svg style="left:14px;top:564px" width="53" height="53"><path d="M15 33.4 Q19 30 23 36 Q26 37 28 35 V9 Q29 5.5 32 6.5 L37 9.5 H46 V33.4 H49" stroke="#e2e2e2" stroke-width="1.7" fill="none"/><path d="M8.2 22.7 V45.7" stroke="#e48a30" stroke-width="1.7"/><path d="M8.2 20.7 L4.699999999999999 25.7 H11.7Z" fill="#e48a30"/><path d="M3.1999999999999993 47.7 H13.2" stroke="#e48a30" stroke-width="1.8"/><path d="M14.6 21 H46.4" stroke="#e48a30" stroke-width="1.7" stroke-dasharray="3 2.3"/></svg>
<div class="a" style="left:10px;top:619px;width:60px;height:1px;background:#b4b4b4"></div>
<div class="a" style="left:10px;top:625px;width:60px;height:58px;border-right:2px solid #c4c4c4;border-bottom:2px solid #aaa;background:#edecea"></div>
<div class="t" style="left:10px;top:637px;width:58px;text-align:center;font-size:14.5px;font-weight:bold;color:#1a1a1a;-webkit-text-stroke:0.1px #1a1a1a;line-height:17px;white-space:normal">More<br>(1 of 2)</div>
<div class="a" style="left:10px;top:684px;width:60px;height:59px;border-right:2px solid #c4c4c4;border-bottom:2px solid #aaa;background:#edecea"></div>
<div class="t" style="left:10px;top:696px;width:58px;text-align:center;font-size:14.5px;font-weight:bold;color:#1a1a1a;-webkit-text-stroke:0.1px #1a1a1a;line-height:17px;white-space:normal">Delete<br>All</div>
</div></body></html>
